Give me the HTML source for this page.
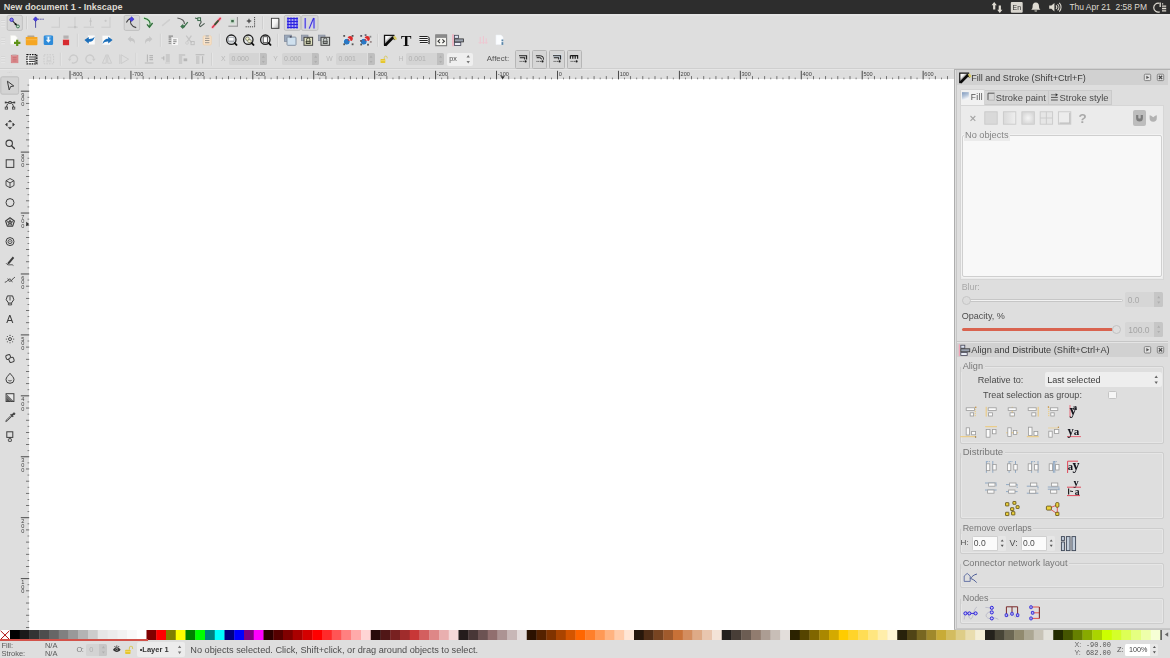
<!DOCTYPE html>
<html><head><meta charset="utf-8"><title>New document 1 - Inkscape</title>
<style>
html,body{margin:0;padding:0;}
body{width:1170px;height:658px;overflow:hidden;background:linear-gradient(#2d2d2d 0,#2d2d2d 14px,#dedede 14px);position:relative;font-family:"Liberation Sans",sans-serif;font-size:9.1px;color:#4c4c4c;}
#app{position:absolute;left:0;top:0;width:1170px;height:658px;overflow:hidden;filter:blur(0.5px);}
#app div,#app svg{position:absolute;box-sizing:border-box;}
#app svg{overflow:visible;}
.t{white-space:pre;}
</style></head><body><div id="app">
<div style="left:0px;top:0px;width:1170px;height:14px;background:#2d2d2d;"></div>
<div style="left:0px;top:14px;width:1170px;height:2px;background:linear-gradient(#e6e6e6,#e2e2e2);"></div>
<div class="t" style="left:3.8px;top:1.3px;font-size:9.06px;color:#dfdbd2;line-height:12px;font-weight:bold;">New document 1 - Inkscape</div>
<div class="t" style="left:1069.4px;top:1.3px;font-size:8.46px;color:#dfdbd2;line-height:12px;">Thu Apr 21  2:58 PM</div>
<div style="left:0px;top:68.3px;width:1170px;height:1px;background:#cfcfcf;"></div>
<div style="left:0px;top:69.3px;width:1170px;height:0.8px;background:#e6e6e6;"></div>
<div style="left:29px;top:79.3px;width:925.3px;height:550.3px;background:#fff;"></div>
<svg style="left:0px;top:0px;" width="1170" height="658" viewBox="0 0 1170 658"><rect x="33.04" y="76.1" width="0.8" height="3.2" fill="#555"/><rect x="39.13" y="77.6" width="0.8" height="1.7" fill="#666"/><rect x="45.23" y="76.1" width="0.8" height="3.2" fill="#555"/><rect x="51.32" y="77.6" width="0.8" height="1.7" fill="#666"/><rect x="57.41" y="76.1" width="0.8" height="3.2" fill="#555"/><rect x="63.51" y="77.6" width="0.8" height="1.7" fill="#666"/><rect x="69.55" y="70.8" width="0.9" height="8.6" fill="#3a3a3a"/><rect x="75.69" y="77.6" width="0.8" height="1.7" fill="#666"/><rect x="81.79" y="76.1" width="0.8" height="3.2" fill="#555"/><rect x="87.88" y="77.6" width="0.8" height="1.7" fill="#666"/><rect x="93.97" y="76.1" width="0.8" height="3.2" fill="#555"/><rect x="100.07" y="77.6" width="0.8" height="1.7" fill="#666"/><rect x="106.16" y="76.1" width="0.8" height="3.2" fill="#555"/><rect x="112.26" y="77.6" width="0.8" height="1.7" fill="#666"/><rect x="118.35" y="76.1" width="0.8" height="3.2" fill="#555"/><rect x="124.44" y="77.6" width="0.8" height="1.7" fill="#666"/><rect x="130.49" y="70.8" width="0.9" height="8.6" fill="#3a3a3a"/><rect x="136.63" y="77.6" width="0.8" height="1.7" fill="#666"/><rect x="142.72" y="76.1" width="0.8" height="3.2" fill="#555"/><rect x="148.82" y="77.6" width="0.8" height="1.7" fill="#666"/><rect x="154.91" y="76.1" width="0.8" height="3.2" fill="#555"/><rect x="161.01" y="77.6" width="0.8" height="1.7" fill="#666"/><rect x="167.10" y="76.1" width="0.8" height="3.2" fill="#555"/><rect x="173.19" y="77.6" width="0.8" height="1.7" fill="#666"/><rect x="179.29" y="76.1" width="0.8" height="3.2" fill="#555"/><rect x="185.38" y="77.6" width="0.8" height="1.7" fill="#666"/><rect x="191.43" y="70.8" width="0.9" height="8.6" fill="#3a3a3a"/><rect x="197.57" y="77.6" width="0.8" height="1.7" fill="#666"/><rect x="203.66" y="76.1" width="0.8" height="3.2" fill="#555"/><rect x="209.76" y="77.6" width="0.8" height="1.7" fill="#666"/><rect x="215.85" y="76.1" width="0.8" height="3.2" fill="#555"/><rect x="221.94" y="77.6" width="0.8" height="1.7" fill="#666"/><rect x="228.04" y="76.1" width="0.8" height="3.2" fill="#555"/><rect x="234.13" y="77.6" width="0.8" height="1.7" fill="#666"/><rect x="240.22" y="76.1" width="0.8" height="3.2" fill="#555"/><rect x="246.32" y="77.6" width="0.8" height="1.7" fill="#666"/><rect x="252.36" y="70.8" width="0.9" height="8.6" fill="#3a3a3a"/><rect x="258.51" y="77.6" width="0.8" height="1.7" fill="#666"/><rect x="264.60" y="76.1" width="0.8" height="3.2" fill="#555"/><rect x="270.69" y="77.6" width="0.8" height="1.7" fill="#666"/><rect x="276.79" y="76.1" width="0.8" height="3.2" fill="#555"/><rect x="282.88" y="77.6" width="0.8" height="1.7" fill="#666"/><rect x="288.98" y="76.1" width="0.8" height="3.2" fill="#555"/><rect x="295.07" y="77.6" width="0.8" height="1.7" fill="#666"/><rect x="301.16" y="76.1" width="0.8" height="3.2" fill="#555"/><rect x="307.26" y="77.6" width="0.8" height="1.7" fill="#666"/><rect x="313.30" y="70.8" width="0.9" height="8.6" fill="#3a3a3a"/><rect x="319.44" y="77.6" width="0.8" height="1.7" fill="#666"/><rect x="325.54" y="76.1" width="0.8" height="3.2" fill="#555"/><rect x="331.63" y="77.6" width="0.8" height="1.7" fill="#666"/><rect x="337.73" y="76.1" width="0.8" height="3.2" fill="#555"/><rect x="343.82" y="77.6" width="0.8" height="1.7" fill="#666"/><rect x="349.91" y="76.1" width="0.8" height="3.2" fill="#555"/><rect x="356.01" y="77.6" width="0.8" height="1.7" fill="#666"/><rect x="362.10" y="76.1" width="0.8" height="3.2" fill="#555"/><rect x="368.19" y="77.6" width="0.8" height="1.7" fill="#666"/><rect x="374.24" y="70.8" width="0.9" height="8.6" fill="#3a3a3a"/><rect x="380.38" y="77.6" width="0.8" height="1.7" fill="#666"/><rect x="386.48" y="76.1" width="0.8" height="3.2" fill="#555"/><rect x="392.57" y="77.6" width="0.8" height="1.7" fill="#666"/><rect x="398.66" y="76.1" width="0.8" height="3.2" fill="#555"/><rect x="404.76" y="77.6" width="0.8" height="1.7" fill="#666"/><rect x="410.85" y="76.1" width="0.8" height="3.2" fill="#555"/><rect x="416.94" y="77.6" width="0.8" height="1.7" fill="#666"/><rect x="423.04" y="76.1" width="0.8" height="3.2" fill="#555"/><rect x="429.13" y="77.6" width="0.8" height="1.7" fill="#666"/><rect x="435.18" y="70.8" width="0.9" height="8.6" fill="#3a3a3a"/><rect x="441.32" y="77.6" width="0.8" height="1.7" fill="#666"/><rect x="447.41" y="76.1" width="0.8" height="3.2" fill="#555"/><rect x="453.51" y="77.6" width="0.8" height="1.7" fill="#666"/><rect x="459.60" y="76.1" width="0.8" height="3.2" fill="#555"/><rect x="465.69" y="77.6" width="0.8" height="1.7" fill="#666"/><rect x="471.79" y="76.1" width="0.8" height="3.2" fill="#555"/><rect x="477.88" y="77.6" width="0.8" height="1.7" fill="#666"/><rect x="483.98" y="76.1" width="0.8" height="3.2" fill="#555"/><rect x="490.07" y="77.6" width="0.8" height="1.7" fill="#666"/><rect x="496.11" y="70.8" width="0.9" height="8.6" fill="#3a3a3a"/><rect x="502.26" y="77.6" width="0.8" height="1.7" fill="#666"/><rect x="508.35" y="76.1" width="0.8" height="3.2" fill="#555"/><rect x="514.44" y="77.6" width="0.8" height="1.7" fill="#666"/><rect x="520.54" y="76.1" width="0.8" height="3.2" fill="#555"/><rect x="526.63" y="77.6" width="0.8" height="1.7" fill="#666"/><rect x="532.73" y="76.1" width="0.8" height="3.2" fill="#555"/><rect x="538.82" y="77.6" width="0.8" height="1.7" fill="#666"/><rect x="544.91" y="76.1" width="0.8" height="3.2" fill="#555"/><rect x="551.01" y="77.6" width="0.8" height="1.7" fill="#666"/><rect x="557.05" y="70.8" width="0.9" height="8.6" fill="#3a3a3a"/><rect x="563.19" y="77.6" width="0.8" height="1.7" fill="#666"/><rect x="569.29" y="76.1" width="0.8" height="3.2" fill="#555"/><rect x="575.38" y="77.6" width="0.8" height="1.7" fill="#666"/><rect x="581.48" y="76.1" width="0.8" height="3.2" fill="#555"/><rect x="587.57" y="77.6" width="0.8" height="1.7" fill="#666"/><rect x="593.66" y="76.1" width="0.8" height="3.2" fill="#555"/><rect x="599.76" y="77.6" width="0.8" height="1.7" fill="#666"/><rect x="605.85" y="76.1" width="0.8" height="3.2" fill="#555"/><rect x="611.94" y="77.6" width="0.8" height="1.7" fill="#666"/><rect x="617.99" y="70.8" width="0.9" height="8.6" fill="#3a3a3a"/><rect x="624.13" y="77.6" width="0.8" height="1.7" fill="#666"/><rect x="630.23" y="76.1" width="0.8" height="3.2" fill="#555"/><rect x="636.32" y="77.6" width="0.8" height="1.7" fill="#666"/><rect x="642.41" y="76.1" width="0.8" height="3.2" fill="#555"/><rect x="648.51" y="77.6" width="0.8" height="1.7" fill="#666"/><rect x="654.60" y="76.1" width="0.8" height="3.2" fill="#555"/><rect x="660.69" y="77.6" width="0.8" height="1.7" fill="#666"/><rect x="666.79" y="76.1" width="0.8" height="3.2" fill="#555"/><rect x="672.88" y="77.6" width="0.8" height="1.7" fill="#666"/><rect x="678.92" y="70.8" width="0.9" height="8.6" fill="#3a3a3a"/><rect x="685.07" y="77.6" width="0.8" height="1.7" fill="#666"/><rect x="691.16" y="76.1" width="0.8" height="3.2" fill="#555"/><rect x="697.26" y="77.6" width="0.8" height="1.7" fill="#666"/><rect x="703.35" y="76.1" width="0.8" height="3.2" fill="#555"/><rect x="709.44" y="77.6" width="0.8" height="1.7" fill="#666"/><rect x="715.54" y="76.1" width="0.8" height="3.2" fill="#555"/><rect x="721.63" y="77.6" width="0.8" height="1.7" fill="#666"/><rect x="727.73" y="76.1" width="0.8" height="3.2" fill="#555"/><rect x="733.82" y="77.6" width="0.8" height="1.7" fill="#666"/><rect x="739.86" y="70.8" width="0.9" height="8.6" fill="#3a3a3a"/><rect x="746.01" y="77.6" width="0.8" height="1.7" fill="#666"/><rect x="752.10" y="76.1" width="0.8" height="3.2" fill="#555"/><rect x="758.19" y="77.6" width="0.8" height="1.7" fill="#666"/><rect x="764.29" y="76.1" width="0.8" height="3.2" fill="#555"/><rect x="770.38" y="77.6" width="0.8" height="1.7" fill="#666"/><rect x="776.48" y="76.1" width="0.8" height="3.2" fill="#555"/><rect x="782.57" y="77.6" width="0.8" height="1.7" fill="#666"/><rect x="788.66" y="76.1" width="0.8" height="3.2" fill="#555"/><rect x="794.76" y="77.6" width="0.8" height="1.7" fill="#666"/><rect x="800.80" y="70.8" width="0.9" height="8.6" fill="#3a3a3a"/><rect x="806.94" y="77.6" width="0.8" height="1.7" fill="#666"/><rect x="813.04" y="76.1" width="0.8" height="3.2" fill="#555"/><rect x="819.13" y="77.6" width="0.8" height="1.7" fill="#666"/><rect x="825.23" y="76.1" width="0.8" height="3.2" fill="#555"/><rect x="831.32" y="77.6" width="0.8" height="1.7" fill="#666"/><rect x="837.41" y="76.1" width="0.8" height="3.2" fill="#555"/><rect x="843.51" y="77.6" width="0.8" height="1.7" fill="#666"/><rect x="849.60" y="76.1" width="0.8" height="3.2" fill="#555"/><rect x="855.69" y="77.6" width="0.8" height="1.7" fill="#666"/><rect x="861.74" y="70.8" width="0.9" height="8.6" fill="#3a3a3a"/><rect x="867.88" y="77.6" width="0.8" height="1.7" fill="#666"/><rect x="873.98" y="76.1" width="0.8" height="3.2" fill="#555"/><rect x="880.07" y="77.6" width="0.8" height="1.7" fill="#666"/><rect x="886.16" y="76.1" width="0.8" height="3.2" fill="#555"/><rect x="892.26" y="77.6" width="0.8" height="1.7" fill="#666"/><rect x="898.35" y="76.1" width="0.8" height="3.2" fill="#555"/><rect x="904.44" y="77.6" width="0.8" height="1.7" fill="#666"/><rect x="910.54" y="76.1" width="0.8" height="3.2" fill="#555"/><rect x="916.63" y="77.6" width="0.8" height="1.7" fill="#666"/><rect x="922.67" y="70.8" width="0.9" height="8.6" fill="#3a3a3a"/><rect x="928.82" y="77.6" width="0.8" height="1.7" fill="#666"/><rect x="934.91" y="76.1" width="0.8" height="3.2" fill="#555"/><rect x="941.01" y="77.6" width="0.8" height="1.7" fill="#666"/><rect x="947.10" y="76.1" width="0.8" height="3.2" fill="#555"/><text x="71.20" y="75.6" font-size="5.6" fill="#444" font-family="Liberation Sans, sans-serif">-800</text><text x="132.14" y="75.6" font-size="5.6" fill="#444" font-family="Liberation Sans, sans-serif">-700</text><text x="193.07" y="75.6" font-size="5.6" fill="#444" font-family="Liberation Sans, sans-serif">-600</text><text x="254.01" y="75.6" font-size="5.6" fill="#444" font-family="Liberation Sans, sans-serif">-500</text><text x="314.95" y="75.6" font-size="5.6" fill="#444" font-family="Liberation Sans, sans-serif">-400</text><text x="375.89" y="75.6" font-size="5.6" fill="#444" font-family="Liberation Sans, sans-serif">-300</text><text x="436.82" y="75.6" font-size="5.6" fill="#444" font-family="Liberation Sans, sans-serif">-200</text><text x="497.76" y="75.6" font-size="5.6" fill="#444" font-family="Liberation Sans, sans-serif">-100</text><text x="558.70" y="75.6" font-size="5.6" fill="#444" font-family="Liberation Sans, sans-serif">0</text><text x="619.64" y="75.6" font-size="5.6" fill="#444" font-family="Liberation Sans, sans-serif">100</text><text x="680.58" y="75.6" font-size="5.6" fill="#444" font-family="Liberation Sans, sans-serif">200</text><text x="741.51" y="75.6" font-size="5.6" fill="#444" font-family="Liberation Sans, sans-serif">300</text><text x="802.45" y="75.6" font-size="5.6" fill="#444" font-family="Liberation Sans, sans-serif">400</text><text x="863.39" y="75.6" font-size="5.6" fill="#444" font-family="Liberation Sans, sans-serif">500</text><text x="924.33" y="75.6" font-size="5.6" fill="#444" font-family="Liberation Sans, sans-serif">600</text><path d="M500.46 76.2h4.4l-2.2 3z" fill="#333"/><rect x="27.5" y="84.66" width="1.7" height="0.8" fill="#666"/><rect x="20.8" y="90.71" width="8.4" height="0.9" fill="#3a3a3a"/><rect x="27.5" y="96.85" width="1.7" height="0.8" fill="#666"/><rect x="26" y="102.94" width="3.2" height="0.8" fill="#555"/><rect x="27.5" y="109.04" width="1.7" height="0.8" fill="#666"/><rect x="26" y="115.13" width="3.2" height="0.8" fill="#555"/><rect x="27.5" y="121.22" width="1.7" height="0.8" fill="#666"/><rect x="26" y="127.32" width="3.2" height="0.8" fill="#555"/><rect x="27.5" y="133.41" width="1.7" height="0.8" fill="#666"/><rect x="26" y="139.51" width="3.2" height="0.8" fill="#555"/><rect x="27.5" y="145.60" width="1.7" height="0.8" fill="#666"/><rect x="20.8" y="151.64" width="8.4" height="0.9" fill="#3a3a3a"/><rect x="27.5" y="157.79" width="1.7" height="0.8" fill="#666"/><rect x="26" y="163.88" width="3.2" height="0.8" fill="#555"/><rect x="27.5" y="169.97" width="1.7" height="0.8" fill="#666"/><rect x="26" y="176.07" width="3.2" height="0.8" fill="#555"/><rect x="27.5" y="182.16" width="1.7" height="0.8" fill="#666"/><rect x="26" y="188.26" width="3.2" height="0.8" fill="#555"/><rect x="27.5" y="194.35" width="1.7" height="0.8" fill="#666"/><rect x="26" y="200.44" width="3.2" height="0.8" fill="#555"/><rect x="27.5" y="206.54" width="1.7" height="0.8" fill="#666"/><rect x="20.8" y="212.58" width="8.4" height="0.9" fill="#3a3a3a"/><rect x="27.5" y="218.72" width="1.7" height="0.8" fill="#666"/><rect x="26" y="224.82" width="3.2" height="0.8" fill="#555"/><rect x="27.5" y="230.91" width="1.7" height="0.8" fill="#666"/><rect x="26" y="237.01" width="3.2" height="0.8" fill="#555"/><rect x="27.5" y="243.10" width="1.7" height="0.8" fill="#666"/><rect x="26" y="249.19" width="3.2" height="0.8" fill="#555"/><rect x="27.5" y="255.29" width="1.7" height="0.8" fill="#666"/><rect x="26" y="261.38" width="3.2" height="0.8" fill="#555"/><rect x="27.5" y="267.48" width="1.7" height="0.8" fill="#666"/><rect x="20.8" y="273.52" width="8.4" height="0.9" fill="#3a3a3a"/><rect x="27.5" y="279.66" width="1.7" height="0.8" fill="#666"/><rect x="26" y="285.76" width="3.2" height="0.8" fill="#555"/><rect x="27.5" y="291.85" width="1.7" height="0.8" fill="#666"/><rect x="26" y="297.94" width="3.2" height="0.8" fill="#555"/><rect x="27.5" y="304.04" width="1.7" height="0.8" fill="#666"/><rect x="26" y="310.13" width="3.2" height="0.8" fill="#555"/><rect x="27.5" y="316.23" width="1.7" height="0.8" fill="#666"/><rect x="26" y="322.32" width="3.2" height="0.8" fill="#555"/><rect x="27.5" y="328.41" width="1.7" height="0.8" fill="#666"/><rect x="20.8" y="334.46" width="8.4" height="0.9" fill="#3a3a3a"/><rect x="27.5" y="340.60" width="1.7" height="0.8" fill="#666"/><rect x="26" y="346.69" width="3.2" height="0.8" fill="#555"/><rect x="27.5" y="352.79" width="1.7" height="0.8" fill="#666"/><rect x="26" y="358.88" width="3.2" height="0.8" fill="#555"/><rect x="27.5" y="364.98" width="1.7" height="0.8" fill="#666"/><rect x="26" y="371.07" width="3.2" height="0.8" fill="#555"/><rect x="27.5" y="377.16" width="1.7" height="0.8" fill="#666"/><rect x="26" y="383.26" width="3.2" height="0.8" fill="#555"/><rect x="27.5" y="389.35" width="1.7" height="0.8" fill="#666"/><rect x="20.8" y="395.39" width="8.4" height="0.9" fill="#3a3a3a"/><rect x="27.5" y="401.54" width="1.7" height="0.8" fill="#666"/><rect x="26" y="407.63" width="3.2" height="0.8" fill="#555"/><rect x="27.5" y="413.73" width="1.7" height="0.8" fill="#666"/><rect x="26" y="419.82" width="3.2" height="0.8" fill="#555"/><rect x="27.5" y="425.91" width="1.7" height="0.8" fill="#666"/><rect x="26" y="432.01" width="3.2" height="0.8" fill="#555"/><rect x="27.5" y="438.10" width="1.7" height="0.8" fill="#666"/><rect x="26" y="444.19" width="3.2" height="0.8" fill="#555"/><rect x="27.5" y="450.29" width="1.7" height="0.8" fill="#666"/><rect x="20.8" y="456.33" width="8.4" height="0.9" fill="#3a3a3a"/><rect x="27.5" y="462.48" width="1.7" height="0.8" fill="#666"/><rect x="26" y="468.57" width="3.2" height="0.8" fill="#555"/><rect x="27.5" y="474.66" width="1.7" height="0.8" fill="#666"/><rect x="26" y="480.76" width="3.2" height="0.8" fill="#555"/><rect x="27.5" y="486.85" width="1.7" height="0.8" fill="#666"/><rect x="26" y="492.94" width="3.2" height="0.8" fill="#555"/><rect x="27.5" y="499.04" width="1.7" height="0.8" fill="#666"/><rect x="26" y="505.13" width="3.2" height="0.8" fill="#555"/><rect x="27.5" y="511.23" width="1.7" height="0.8" fill="#666"/><rect x="20.8" y="517.27" width="8.4" height="0.9" fill="#3a3a3a"/><rect x="27.5" y="523.41" width="1.7" height="0.8" fill="#666"/><rect x="26" y="529.51" width="3.2" height="0.8" fill="#555"/><rect x="27.5" y="535.60" width="1.7" height="0.8" fill="#666"/><rect x="26" y="541.69" width="3.2" height="0.8" fill="#555"/><rect x="27.5" y="547.79" width="1.7" height="0.8" fill="#666"/><rect x="26" y="553.88" width="3.2" height="0.8" fill="#555"/><rect x="27.5" y="559.98" width="1.7" height="0.8" fill="#666"/><rect x="26" y="566.07" width="3.2" height="0.8" fill="#555"/><rect x="27.5" y="572.16" width="1.7" height="0.8" fill="#666"/><rect x="20.8" y="578.21" width="8.4" height="0.9" fill="#3a3a3a"/><rect x="27.5" y="584.35" width="1.7" height="0.8" fill="#666"/><rect x="26" y="590.44" width="3.2" height="0.8" fill="#555"/><rect x="27.5" y="596.54" width="1.7" height="0.8" fill="#666"/><rect x="26" y="602.63" width="3.2" height="0.8" fill="#555"/><rect x="27.5" y="608.73" width="1.7" height="0.8" fill="#666"/><rect x="26" y="614.82" width="3.2" height="0.8" fill="#555"/><rect x="27.5" y="620.91" width="1.7" height="0.8" fill="#666"/><rect x="26" y="627.01" width="3.2" height="0.8" fill="#555"/><text x="21.2" y="96.76" font-size="5.6" fill="#444" font-family="Liberation Sans, sans-serif">9</text><text x="21.2" y="101.36" font-size="5.6" fill="#444" font-family="Liberation Sans, sans-serif">0</text><text x="21.2" y="105.96" font-size="5.6" fill="#444" font-family="Liberation Sans, sans-serif">0</text><text x="21.2" y="157.69" font-size="5.6" fill="#444" font-family="Liberation Sans, sans-serif">8</text><text x="21.2" y="162.29" font-size="5.6" fill="#444" font-family="Liberation Sans, sans-serif">0</text><text x="21.2" y="166.89" font-size="5.6" fill="#444" font-family="Liberation Sans, sans-serif">0</text><text x="21.2" y="218.63" font-size="5.6" fill="#444" font-family="Liberation Sans, sans-serif">7</text><text x="21.2" y="223.23" font-size="5.6" fill="#444" font-family="Liberation Sans, sans-serif">0</text><text x="21.2" y="227.83" font-size="5.6" fill="#444" font-family="Liberation Sans, sans-serif">0</text><text x="21.2" y="279.57" font-size="5.6" fill="#444" font-family="Liberation Sans, sans-serif">6</text><text x="21.2" y="284.17" font-size="5.6" fill="#444" font-family="Liberation Sans, sans-serif">0</text><text x="21.2" y="288.77" font-size="5.6" fill="#444" font-family="Liberation Sans, sans-serif">0</text><text x="21.2" y="340.51" font-size="5.6" fill="#444" font-family="Liberation Sans, sans-serif">5</text><text x="21.2" y="345.11" font-size="5.6" fill="#444" font-family="Liberation Sans, sans-serif">0</text><text x="21.2" y="349.71" font-size="5.6" fill="#444" font-family="Liberation Sans, sans-serif">0</text><text x="21.2" y="401.44" font-size="5.6" fill="#444" font-family="Liberation Sans, sans-serif">4</text><text x="21.2" y="406.04" font-size="5.6" fill="#444" font-family="Liberation Sans, sans-serif">0</text><text x="21.2" y="410.64" font-size="5.6" fill="#444" font-family="Liberation Sans, sans-serif">0</text><text x="21.2" y="462.38" font-size="5.6" fill="#444" font-family="Liberation Sans, sans-serif">3</text><text x="21.2" y="466.98" font-size="5.6" fill="#444" font-family="Liberation Sans, sans-serif">0</text><text x="21.2" y="471.58" font-size="5.6" fill="#444" font-family="Liberation Sans, sans-serif">0</text><text x="21.2" y="523.32" font-size="5.6" fill="#444" font-family="Liberation Sans, sans-serif">2</text><text x="21.2" y="527.92" font-size="5.6" fill="#444" font-family="Liberation Sans, sans-serif">0</text><text x="21.2" y="532.52" font-size="5.6" fill="#444" font-family="Liberation Sans, sans-serif">0</text><text x="21.2" y="584.26" font-size="5.6" fill="#444" font-family="Liberation Sans, sans-serif">1</text><text x="21.2" y="588.86" font-size="5.6" fill="#444" font-family="Liberation Sans, sans-serif">0</text><text x="21.2" y="593.46" font-size="5.6" fill="#444" font-family="Liberation Sans, sans-serif">0</text><path d="M26.2 221.80v4.4l3 -2.2z" fill="#333"/></svg>
<svg style="left:0px;top:630.2px;" width="1170" height="10" viewBox="0 0 1170 10"><rect x="0" y="0" width="10" height="10" fill="#fff"/><path d="M0.6 0.8L9.4 9.4M9.4 0.8L0.6 9.4" stroke="#b01010" stroke-width="1" fill="none"/><rect x="10.00" y="0" width="10.05" height="10" fill="#000000"/><rect x="19.75" y="0" width="10.05" height="10" fill="#1a1a1a"/><rect x="29.50" y="0" width="10.05" height="10" fill="#333333"/><rect x="39.25" y="0" width="10.05" height="10" fill="#4d4d4d"/><rect x="49.00" y="0" width="10.05" height="10" fill="#666666"/><rect x="58.75" y="0" width="10.05" height="10" fill="#808080"/><rect x="68.50" y="0" width="10.05" height="10" fill="#999999"/><rect x="78.25" y="0" width="10.05" height="10" fill="#b3b3b3"/><rect x="88.00" y="0" width="10.05" height="10" fill="#cccccc"/><rect x="97.75" y="0" width="10.05" height="10" fill="#e6e6e6"/><rect x="107.50" y="0" width="10.05" height="10" fill="#ececec"/><rect x="117.25" y="0" width="10.05" height="10" fill="#f2f2f2"/><rect x="127.00" y="0" width="10.05" height="10" fill="#f9f9f9"/><rect x="136.75" y="0" width="10.05" height="10" fill="#ffffff"/><rect x="146.50" y="0" width="10.05" height="10" fill="#800000"/><rect x="156.25" y="0" width="10.05" height="10" fill="#ff0000"/><rect x="166.00" y="0" width="10.05" height="10" fill="#808000"/><rect x="175.75" y="0" width="10.05" height="10" fill="#ffff00"/><rect x="185.50" y="0" width="10.05" height="10" fill="#008000"/><rect x="195.25" y="0" width="10.05" height="10" fill="#00ff00"/><rect x="205.00" y="0" width="10.05" height="10" fill="#008080"/><rect x="214.75" y="0" width="10.05" height="10" fill="#00ffff"/><rect x="224.50" y="0" width="10.05" height="10" fill="#000080"/><rect x="234.25" y="0" width="10.05" height="10" fill="#0000ff"/><rect x="244.00" y="0" width="10.05" height="10" fill="#800080"/><rect x="253.75" y="0" width="10.05" height="10" fill="#ff00ff"/><rect x="263.50" y="0" width="10.05" height="10" fill="#2b0000"/><rect x="273.25" y="0" width="10.05" height="10" fill="#550000"/><rect x="283.00" y="0" width="10.05" height="10" fill="#800000"/><rect x="292.75" y="0" width="10.05" height="10" fill="#aa0000"/><rect x="302.50" y="0" width="10.05" height="10" fill="#d40000"/><rect x="312.25" y="0" width="10.05" height="10" fill="#ff0000"/><rect x="322.00" y="0" width="10.05" height="10" fill="#ff2a2a"/><rect x="331.75" y="0" width="10.05" height="10" fill="#ff5555"/><rect x="341.50" y="0" width="10.05" height="10" fill="#ff8080"/><rect x="351.25" y="0" width="10.05" height="10" fill="#ffaaaa"/><rect x="361.00" y="0" width="10.05" height="10" fill="#ffd5d5"/><rect x="370.75" y="0" width="10.05" height="10" fill="#280b0b"/><rect x="380.50" y="0" width="10.05" height="10" fill="#501616"/><rect x="390.25" y="0" width="10.05" height="10" fill="#782121"/><rect x="400.00" y="0" width="10.05" height="10" fill="#a02c2c"/><rect x="409.75" y="0" width="10.05" height="10" fill="#c83737"/><rect x="419.50" y="0" width="10.05" height="10" fill="#d35f5f"/><rect x="429.25" y="0" width="10.05" height="10" fill="#de8787"/><rect x="439.00" y="0" width="10.05" height="10" fill="#e9afaf"/><rect x="448.75" y="0" width="10.05" height="10" fill="#f4d7d7"/><rect x="458.50" y="0" width="10.05" height="10" fill="#241c1c"/><rect x="468.25" y="0" width="10.05" height="10" fill="#483737"/><rect x="478.00" y="0" width="10.05" height="10" fill="#6c5353"/><rect x="487.75" y="0" width="10.05" height="10" fill="#916f6f"/><rect x="497.50" y="0" width="10.05" height="10" fill="#ac9393"/><rect x="507.25" y="0" width="10.05" height="10" fill="#c8b7b7"/><rect x="517.00" y="0" width="10.05" height="10" fill="#e3dbdb"/><rect x="526.75" y="0" width="10.05" height="10" fill="#2b1100"/><rect x="536.50" y="0" width="10.05" height="10" fill="#552200"/><rect x="546.25" y="0" width="10.05" height="10" fill="#803300"/><rect x="556.00" y="0" width="10.05" height="10" fill="#aa4400"/><rect x="565.75" y="0" width="10.05" height="10" fill="#d45500"/><rect x="575.50" y="0" width="10.05" height="10" fill="#ff6600"/><rect x="585.25" y="0" width="10.05" height="10" fill="#ff7f2a"/><rect x="595.00" y="0" width="10.05" height="10" fill="#ff9955"/><rect x="604.75" y="0" width="10.05" height="10" fill="#ffb380"/><rect x="614.50" y="0" width="10.05" height="10" fill="#ffccaa"/><rect x="624.25" y="0" width="10.05" height="10" fill="#ffe6d5"/><rect x="634.00" y="0" width="10.05" height="10" fill="#28170b"/><rect x="643.75" y="0" width="10.05" height="10" fill="#502d16"/><rect x="653.50" y="0" width="10.05" height="10" fill="#784421"/><rect x="663.25" y="0" width="10.05" height="10" fill="#a05a2c"/><rect x="673.00" y="0" width="10.05" height="10" fill="#c87137"/><rect x="682.75" y="0" width="10.05" height="10" fill="#d38d5f"/><rect x="692.50" y="0" width="10.05" height="10" fill="#deaa87"/><rect x="702.25" y="0" width="10.05" height="10" fill="#e9c6af"/><rect x="712.00" y="0" width="10.05" height="10" fill="#f4e3d7"/><rect x="721.75" y="0" width="10.05" height="10" fill="#241f1c"/><rect x="731.50" y="0" width="10.05" height="10" fill="#483e37"/><rect x="741.25" y="0" width="10.05" height="10" fill="#6c5d53"/><rect x="751.00" y="0" width="10.05" height="10" fill="#917c6f"/><rect x="760.75" y="0" width="10.05" height="10" fill="#ac9d93"/><rect x="770.50" y="0" width="10.05" height="10" fill="#c8beb7"/><rect x="780.25" y="0" width="10.05" height="10" fill="#e3dedb"/><rect x="790.00" y="0" width="10.05" height="10" fill="#2b2200"/><rect x="799.75" y="0" width="10.05" height="10" fill="#554400"/><rect x="809.50" y="0" width="10.05" height="10" fill="#806600"/><rect x="819.25" y="0" width="10.05" height="10" fill="#aa8800"/><rect x="829.00" y="0" width="10.05" height="10" fill="#d4aa00"/><rect x="838.75" y="0" width="10.05" height="10" fill="#ffcc00"/><rect x="848.50" y="0" width="10.05" height="10" fill="#ffd42a"/><rect x="858.25" y="0" width="10.05" height="10" fill="#ffdd55"/><rect x="868.00" y="0" width="10.05" height="10" fill="#ffe680"/><rect x="877.75" y="0" width="10.05" height="10" fill="#ffeeaa"/><rect x="887.50" y="0" width="10.05" height="10" fill="#fff6d5"/><rect x="897.25" y="0" width="10.05" height="10" fill="#28220b"/><rect x="907.00" y="0" width="10.05" height="10" fill="#504416"/><rect x="916.75" y="0" width="10.05" height="10" fill="#786721"/><rect x="926.50" y="0" width="10.05" height="10" fill="#a0892c"/><rect x="936.25" y="0" width="10.05" height="10" fill="#c8ab37"/><rect x="946.00" y="0" width="10.05" height="10" fill="#d3bc5f"/><rect x="955.75" y="0" width="10.05" height="10" fill="#decd87"/><rect x="965.50" y="0" width="10.05" height="10" fill="#e9ddaf"/><rect x="975.25" y="0" width="10.05" height="10" fill="#f4eed7"/><rect x="985.00" y="0" width="10.05" height="10" fill="#24221c"/><rect x="994.75" y="0" width="10.05" height="10" fill="#484537"/><rect x="1004.50" y="0" width="10.05" height="10" fill="#6c6753"/><rect x="1014.25" y="0" width="10.05" height="10" fill="#918a6f"/><rect x="1024.00" y="0" width="10.05" height="10" fill="#aca793"/><rect x="1033.75" y="0" width="10.05" height="10" fill="#c8c4b7"/><rect x="1043.50" y="0" width="10.05" height="10" fill="#e3e2db"/><rect x="1053.25" y="0" width="10.05" height="10" fill="#222b00"/><rect x="1063.00" y="0" width="10.05" height="10" fill="#445500"/><rect x="1072.75" y="0" width="10.05" height="10" fill="#668000"/><rect x="1082.50" y="0" width="10.05" height="10" fill="#88aa00"/><rect x="1092.25" y="0" width="10.05" height="10" fill="#aad400"/><rect x="1102.00" y="0" width="10.05" height="10" fill="#ccff00"/><rect x="1111.75" y="0" width="10.05" height="10" fill="#d4ff2a"/><rect x="1121.50" y="0" width="10.05" height="10" fill="#ddff55"/><rect x="1131.25" y="0" width="10.05" height="10" fill="#e5ff80"/><rect x="1141.00" y="0" width="10.05" height="10" fill="#eeffaa"/><rect x="1150.75" y="0" width="10.05" height="10" fill="#f6ffd5"/><rect x="1160.50" y="0" width="1.3" height="10" fill="#222"/><rect x="1161.80" y="0" width="8.5" height="10" fill="#dedede"/><path d="M1168.2 2.2v4.6l-3.4 -2.3z" fill="#666"/></svg>
<div style="left:0px;top:639.1px;width:147.5px;height:1.7px;background:#d2524a;"></div>
<div class="t" style="left:1.4px;top:639.6px;font-size:7.5px;color:#5a5a5a;line-height:12px;">Fill:</div>
<div class="t" style="left:1.4px;top:648.2px;font-size:7.5px;color:#5a5a5a;line-height:12px;">Stroke:</div>
<div class="t" style="left:44.9px;top:639.6px;font-size:7.5px;color:#5a5a5a;line-height:12px;">N/A</div>
<div class="t" style="left:44.9px;top:648.2px;font-size:7.5px;color:#5a5a5a;line-height:12px;">N/A</div>
<div class="t" style="left:76.4px;top:643.8px;font-size:7.4px;color:#7a7a7a;line-height:12px;letter-spacing:-0.4px;">O:</div>
<div style="left:86px;top:643.6px;width:13px;height:12.4px;background:#d3d3d3;border-radius:1.5px 0 0 1.5px;"></div>
<div class="t" style="left:89.2px;top:644px;font-size:7.4px;color:#b0b0b0;line-height:12px;">0</div>
<div style="left:99.4px;top:643.6px;width:8px;height:12.4px;background:#c6c6c6;border-radius:0 1.5px 1.5px 0;"></div>
<div style="left:136.6px;top:642.2px;width:48.2px;height:15px;background:#ececec;border-radius:2px;"></div>
<div class="t" style="left:139.7px;top:643.8px;font-size:7.53px;color:#333;line-height:12px;font-weight:bold;">•Layer 1</div>
<div class="t" style="left:190.3px;top:643.6px;font-size:9.19px;color:#4c4c4c;line-height:12px;">No objects selected. Click, Shift+click, or drag around objects to select.</div>
<div class="t" style="left:1074.4px;top:639.2px;font-size:7.2px;color:#666;line-height:12px;">X:</div>
<div class="t" style="left:1074.4px;top:646.8px;font-size:7.2px;color:#666;line-height:12px;">Y:</div>
<div class="t" style="left:1080px;top:639.2px;font-size:6.95px;color:#555;line-height:12px;font-family:'Liberation Mono','DejaVu Sans Mono',monospace;width:30.9px;text-align:right;">-90.00</div>
<div class="t" style="left:1080px;top:646.8px;font-size:6.95px;color:#555;line-height:12px;font-family:'Liberation Mono','DejaVu Sans Mono',monospace;width:30.9px;text-align:right;">682.00</div>
<div class="t" style="left:1117px;top:644px;font-size:7.43px;color:#555;line-height:12px;">Z:</div>
<div style="left:1125px;top:643.8px;width:25.4px;height:11.8px;background:#fff;border-radius:1.5px 0 0 1.5px;"></div>
<div class="t" style="left:1129px;top:643.9px;font-size:7.19px;color:#444;line-height:12px;">100%</div>
<div style="left:1150.4px;top:643.8px;width:8px;height:11.8px;background:#e8e8e8;border-radius:0 1.5px 1.5px 0;"></div>
<div style="left:954px;top:69px;width:216px;height:560.6px;background:#dedede;border-left:1px solid #adadad;border-top:1px solid #b2b2b2;border-bottom:1px solid #c4c4c4;"></div>
<div style="left:956px;top:70px;width:214px;height:558.6px;border-left:1px solid #c6c6c6;border-bottom:1px solid #c8c8c8;"></div>
<div style="left:957px;top:70px;width:211px;height:15px;background:#d1d1d1;"></div>
<div class="t" style="left:971.2px;top:71.9px;font-size:9.06px;color:#3c3c3c;line-height:12px;">Fill and Stroke (Shift+Ctrl+F)</div>
<div style="left:960px;top:88.6px;width:25px;height:17px;background:#f1f1f1;border:1px solid #d4d4d4;border-bottom:none;border-radius:2px 2px 0 0;"></div>
<div style="left:985px;top:90.2px;width:64px;height:14.6px;background:#d6d6d6;border:1px solid #cacaca;border-left:none;"></div>
<div style="left:1049px;top:90.2px;width:62.6px;height:14.6px;background:#d6d6d6;border:1px solid #cacaca;border-left:none;"></div>
<div class="t" style="left:970.8px;top:91.2px;font-size:8.4px;color:#4c4c4c;line-height:12px;letter-spacing:0.35px;">Fill</div>
<div class="t" style="left:995.8px;top:91.6px;font-size:9.37px;color:#4c4c4c;line-height:12px;">Stroke paint</div>
<div class="t" style="left:1059.6px;top:91.6px;font-size:9.38px;color:#4c4c4c;line-height:12px;">Stroke style</div>
<div style="left:959.6px;top:105px;width:204.6px;height:175px;background:#ebebeb;border:1px solid #d6d6d6;"></div>
<div style="left:961.8px;top:135px;width:200px;height:141.6px;background:#f8f8f8;border:1px solid #cfcfcf;border-radius:2px;box-shadow:0 0 0 1px #f2f2f2;"></div>
<div style="left:963.6px;top:129px;width:46px;height:12px;background:#ebebeb;"></div>
<div class="t" style="left:965px;top:129px;font-size:9.21px;color:#858585;line-height:12px;">No objects</div>
<div style="left:1133px;top:110px;width:12.8px;height:16.4px;background:#bdbdbd;border-radius:2px;"></div>
<div class="t" style="left:961.7px;top:281px;font-size:8.8px;color:#a8a8a8;line-height:12px;">Blur:</div>
<div style="left:962px;top:298.8px;width:161.4px;height:3px;background:#f2f2f2;border:1px solid #c6c6c6;border-radius:1.5px;"></div>
<div style="left:962px;top:295.6px;width:9px;height:9px;background:#dcdcdc;border:1px solid #c6c6c6;border-radius:50%;"></div>
<div style="left:1125px;top:292.4px;width:29px;height:15px;background:#d6d6d6;border-radius:1.5px 0 0 1.5px;"></div>
<div class="t" style="left:1127.8px;top:294.2px;font-size:8.34px;color:#a8a8a8;line-height:12px;">0.0</div>
<div style="left:1154.4px;top:292.4px;width:8.6px;height:15px;background:#c6c6c6;border-radius:0 1.5px 1.5px 0;"></div>
<div class="t" style="left:961.7px;top:310.4px;font-size:9.07px;color:#4c4c4c;line-height:12px;">Opacity, %</div>
<div style="left:962px;top:327.6px;width:151px;height:3px;background:#d9634f;border-radius:1.5px;"></div>
<div style="left:1112px;top:324.6px;width:9px;height:9px;background:#dedede;border:1px solid #c2c2c2;border-radius:50%;"></div>
<div style="left:1125px;top:321.8px;width:29px;height:15px;background:#d6d6d6;border-radius:1.5px 0 0 1.5px;"></div>
<div class="t" style="left:1128.3px;top:323.6px;font-size:8.51px;color:#a4a4a4;line-height:12px;">100.0</div>
<div style="left:1154.4px;top:321.8px;width:8.6px;height:15px;background:#c6c6c6;border-radius:0 1.5px 1.5px 0;"></div>
<div style="left:957px;top:341px;width:211px;height:1px;background:#c6c6c6;"></div>
<div style="left:957px;top:342px;width:211px;height:1px;background:#e4e4e4;"></div>
<div style="left:957px;top:343px;width:211px;height:14px;background:#d1d1d1;"></div>
<div class="t" style="left:971.3px;top:344.2px;font-size:9.22px;color:#3c3c3c;line-height:12px;">Align and Distribute (Shift+Ctrl+A)</div>
<div style="left:959.6px;top:366px;width:204px;height:77.6px;border:1px solid #cdcdcd;border-radius:2px;box-shadow:inset 0 0 0 1px #e6e6e6;"></div>
<div style="left:961.4px;top:360px;width:23.2px;height:12px;background:#dedede;"></div>
<div class="t" style="left:962.7px;top:360px;font-size:9.13px;color:#777;line-height:12px;">Align</div>
<div style="left:959.6px;top:452px;width:204px;height:67px;border:1px solid #cdcdcd;border-radius:2px;box-shadow:inset 0 0 0 1px #e6e6e6;"></div>
<div style="left:961.4px;top:446px;width:43.4px;height:12px;background:#dedede;"></div>
<div class="t" style="left:962.7px;top:446px;font-size:9.59px;color:#777;line-height:12px;">Distribute</div>
<div style="left:959.6px;top:528px;width:204px;height:25.6px;border:1px solid #cdcdcd;border-radius:2px;box-shadow:inset 0 0 0 1px #e6e6e6;"></div>
<div style="left:961.4px;top:522px;width:72.1px;height:12px;background:#dedede;"></div>
<div class="t" style="left:962.7px;top:522px;font-size:8.89px;color:#777;line-height:12px;">Remove overlaps</div>
<div style="left:959.6px;top:563px;width:204px;height:25px;border:1px solid #cdcdcd;border-radius:2px;box-shadow:inset 0 0 0 1px #e6e6e6;"></div>
<div style="left:961.4px;top:557px;width:107.9px;height:12px;background:#dedede;"></div>
<div class="t" style="left:962.7px;top:557px;font-size:9.26px;color:#777;line-height:12px;">Connector network layout</div>
<div style="left:959.6px;top:598px;width:204px;height:25.8px;border:1px solid #cdcdcd;border-radius:2px;box-shadow:inset 0 0 0 1px #e6e6e6;"></div>
<div style="left:961.4px;top:592px;width:28.8px;height:12px;background:#dedede;"></div>
<div class="t" style="left:962.7px;top:592px;font-size:8.96px;color:#777;line-height:12px;">Nodes</div>
<div class="t" style="left:977.7px;top:373.8px;font-size:9.14px;color:#4c4c4c;line-height:12px;">Relative to:</div>
<div style="left:1044.6px;top:372.2px;width:117.2px;height:15px;background:#eeeeee;border-radius:2px;"></div>
<div class="t" style="left:1047.2px;top:373.8px;font-size:9.06px;color:#3c3c3c;line-height:12px;">Last selected</div>
<div class="t" style="left:983px;top:389px;font-size:9.03px;color:#4c4c4c;line-height:12px;">Treat selection as group:</div>
<div style="left:1108.4px;top:390.6px;width:8.4px;height:8.4px;background:#f6f6f6;border:1px solid #c4c4c4;border-radius:1.5px;"></div>
<div class="t" style="left:960.6px;top:537.4px;font-size:8.1px;color:#4c4c4c;line-height:12px;">H:</div>
<div style="left:972px;top:535.6px;width:26px;height:15.2px;background:#fbfbfb;border:1px solid #d0d0d0;border-radius:1.5px 0 0 1.5px;"></div>
<div class="t" style="left:973.8px;top:537.4px;font-size:8.56px;color:#4c4c4c;line-height:12px;">0.0</div>
<div style="left:998px;top:535.6px;width:8.4px;height:15.2px;background:#e6e6e6;border-radius:0 1.5px 1.5px 0;"></div>
<div class="t" style="left:1009.6px;top:537.4px;font-size:8.92px;color:#4c4c4c;line-height:12px;">V:</div>
<div style="left:1021px;top:535.6px;width:26px;height:15.2px;background:#fbfbfb;border:1px solid #d0d0d0;border-radius:1.5px 0 0 1.5px;"></div>
<div class="t" style="left:1023px;top:537.4px;font-size:8.49px;color:#4c4c4c;line-height:12px;">0.0</div>
<div style="left:1047px;top:535.6px;width:8.4px;height:15.2px;background:#e6e6e6;border-radius:0 1.5px 1.5px 0;"></div>
<div class="t" style="left:221px;top:53.2px;font-size:6.8px;color:#b9b9b9;line-height:12px;">X</div>
<div style="left:228.9px;top:53px;width:30.2px;height:12px;background:#d4d4d4;border-radius:1.5px 0 0 1.5px;"></div>
<div class="t" style="left:231.4px;top:53.2px;font-size:6.95px;color:#b0b0b0;line-height:12px;">0.000</div>
<div style="left:259.6px;top:52.6px;width:7.4px;height:12.8px;background:#bfbfbf;border-radius:0 1.5px 1.5px 0;"></div>
<div class="t" style="left:273.2px;top:53.2px;font-size:6.8px;color:#b9b9b9;line-height:12px;">Y</div>
<div style="left:281.6px;top:53px;width:30.1px;height:12px;background:#d4d4d4;border-radius:1.5px 0 0 1.5px;"></div>
<div class="t" style="left:284.1px;top:53.2px;font-size:6.95px;color:#b0b0b0;line-height:12px;">0.000</div>
<div style="left:312.2px;top:52.6px;width:7.3px;height:12.8px;background:#bfbfbf;border-radius:0 1.5px 1.5px 0;"></div>
<div class="t" style="left:326.2px;top:53.2px;font-size:6.8px;color:#b9b9b9;line-height:12px;">W</div>
<div style="left:336.1px;top:53px;width:30.9px;height:12px;background:#d4d4d4;border-radius:1.5px 0 0 1.5px;"></div>
<div class="t" style="left:338.6px;top:53.2px;font-size:6.95px;color:#b0b0b0;line-height:12px;">0.001</div>
<div style="left:367.5px;top:52.6px;width:7.5px;height:12.8px;background:#bfbfbf;border-radius:0 1.5px 1.5px 0;"></div>
<div class="t" style="left:398.4px;top:53.2px;font-size:6.8px;color:#b9b9b9;line-height:12px;">H</div>
<div style="left:406px;top:53px;width:30.6px;height:12px;background:#d4d4d4;border-radius:1.5px 0 0 1.5px;"></div>
<div class="t" style="left:408.5px;top:53.2px;font-size:6.95px;color:#b0b0b0;line-height:12px;">0.001</div>
<div style="left:437.1px;top:52.6px;width:7.4px;height:12.8px;background:#bfbfbf;border-radius:0 1.5px 1.5px 0;"></div>
<div style="left:446.8px;top:52.6px;width:26.6px;height:13.4px;background:#efefef;border-radius:2px;"></div>
<div class="t" style="left:449.2px;top:53.2px;font-size:7.1px;color:#4c4c4c;line-height:12px;">px</div>
<div class="t" style="left:486.8px;top:53.4px;font-size:7.95px;color:#555;line-height:12px;">Affect:</div>
<div style="left:515.2px;top:50px;width:15.2px;height:18.6px;background:#d6d6d6;border:1px solid #b6b6b6;border-radius:1.5px;"></div>
<div style="left:532.3px;top:50px;width:15.2px;height:18.6px;background:#d6d6d6;border:1px solid #b6b6b6;border-radius:1.5px;"></div>
<div style="left:549.4px;top:50px;width:15.2px;height:18.6px;background:#d6d6d6;border:1px solid #b6b6b6;border-radius:1.5px;"></div>
<div style="left:566.5px;top:50px;width:15.2px;height:18.6px;background:#d6d6d6;border:1px solid #b6b6b6;border-radius:1.5px;"></div>
<svg style="left:0px;top:0px;" width="1170" height="658" viewBox="0 0 1170 658"><g transform="translate(994.2,6)"><path d="M0 -3.9l2.6 3.2h-1.5v4.2h-2.2v-4.2h-1.5z" fill="#dfdbd2"/></g><g transform="translate(999.8,9)"><path d="M0 3.9l2.6 -3.2h-1.5v-4.2h-2.2v4.2h-1.5z" fill="#dfdbd2"/></g><rect x="1010.8" y="1.9" width="11.9" height="10.8" rx="1" fill="#d9d6cf"/><text x="1012.6" y="10.2" font-size="8" fill="#2c2c2c" font-family="Liberation Sans, sans-serif" textLength="8.4" lengthAdjust="spacingAndGlyphs">En</text><g transform="translate(1035.8,7)"><path d="M0 -4.4c2.4 0 3.2 1.8 3.2 3.8c0 1.6 0.5 2.6 1.5 3.4h-9.4c1 -0.8 1.5 -1.8 1.5 -3.4c0 -2 0.8 -3.8 3.2 -3.8z" fill="#dfdbd2"/><path d="M-1.4 3.4h2.8a1.4 1.2 0 0 1 -2.8 0z" fill="#dfdbd2"/></g><g transform="translate(1055,7.2)"><path d="M-5.8 -1.6h2.2l3 -2.6v8.4l-3 -2.6h-2.2z" fill="#dfdbd2"/><path d="M1 -1.8a2.6 2.6 0 0 1 0 3.6M2.6 -3.2a4.6 4.6 0 0 1 0 6.4M4.3 -4.4a6.4 6.4 0 0 1 0 8.8" stroke="#dfdbd2" stroke-width="1.05" fill="none"/></g><g transform="translate(1160.6,7.2)"><path d="M-1.2 -3.9a4.5 4.5 0 1 0 0.3 8.6" stroke="#dfdbd2" stroke-width="1.2" fill="none"/><path d="M-0.4 -4.8v4.6" stroke="#dfdbd2" stroke-width="1.3"/><path d="M1.4 -3.4h1.2M1.4 -1h4.2M1.4 1.3h4.2M1.4 3.6h4.2" stroke="#dfdbd2" stroke-width="1.3"/></g><g transform="translate(3.2,23)"><path d="M-2 -2.4h4M-2 0h4M-2 2.4h4" stroke="#cfcfcf" stroke-width="0.8"/><path d="M-2 -1.6h4M-2 0.8h4M-2 3.2h4" stroke="#ececec" stroke-width="0.8"/></g><g transform="translate(3.2,40.5)"><path d="M-2 -2.4h4M-2 0h4M-2 2.4h4" stroke="#cfcfcf" stroke-width="0.8"/><path d="M-2 -1.6h4M-2 0.8h4M-2 3.2h4" stroke="#ececec" stroke-width="0.8"/></g><g transform="translate(3.2,59)"><path d="M-2 -2.4h4M-2 0h4M-2 2.4h4" stroke="#cfcfcf" stroke-width="0.8"/><path d="M-2 -1.6h4M-2 0.8h4M-2 3.2h4" stroke="#ececec" stroke-width="0.8"/></g><rect x="7.2" y="15.4" width="15.2" height="15" rx="1.5" fill="#d7d7d7" stroke="#bdbdbd" stroke-width="0.9"/><g transform="translate(15,22.8)"><path d="M-3.4 -3L2.8 3.6" stroke="#333" stroke-width="1.1"/><circle cx="-3.4" cy="-3" r="1.7" fill="#8a7fe6" stroke="#3228c8" stroke-width="0.9"/><circle cx="0.6" cy="1.4" r="1" fill="#111"/><circle cx="2.9" cy="3.6" r="1.5" fill="#cfe4cf" stroke="#2d6b45" stroke-width="0.9"/></g><rect x="26.1" y="16.3" width="0.9" height="13" fill="#cdcdcd"/><rect x="27" y="16.3" width="0.8" height="13" fill="#e8e8e8"/><g transform="translate(39,22.8)"><path d="M-3.4 -2.4V5" stroke="#2c2890" stroke-width="0.8"/><path d="M-1 -3.6H5" stroke="#2c2890" stroke-width="0.8" stroke-dasharray="1.4 0.8"/><path d="M-3.4 -6l2.3 2.4l-2.3 2.4l-2.3 -2.4z" fill="#4a3fe0" stroke="#2a20b0" stroke-width="0.5"/></g><g transform="translate(56,22.8)"><path d="M3.4 -5.6V4.4M-4.6 4.4H4" stroke="#cbcbcb" stroke-width="1" fill="none"/></g><g transform="translate(73,22.8)"><path d="M2 -5.6V4.8M-5.4 4.4H4.8" stroke="#cbcbcb" stroke-width="1" fill="none"/><rect x="1" y="3.2" width="2.2" height="2.2" fill="#c4c4c4"/></g><g transform="translate(89,22.8)"><path d="M-5.4 4.4H5" stroke="#cbcbcb" stroke-width="1" fill="none"/><path d="M1.6 -5V3" stroke="#c6c6c6" stroke-width="1"/><circle cx="1.6" cy="-1.6" r="1.1" fill="#c4c4c4"/></g><g transform="translate(106,22.8)"><path d="M4 -5.6V4.4M-4.6 4.4H4.6" stroke="#cbcbcb" stroke-width="1" fill="none"/><circle cx="-0.4" cy="-2" r="1.1" fill="#c8c8c8"/></g><rect x="124.2" y="15.4" width="15.4" height="15" rx="1.5" fill="#d7d7d7" stroke="#bdbdbd" stroke-width="0.9"/><g transform="translate(131.6,22.8)"><path d="M-5.2 -0.4C-3.6 -3.4 -1.6 -4.4 0 -3.6C-2.6 -0.6 0 3.8 4.6 4.8" stroke="#444" stroke-width="1.1" fill="none"/><path d="M0 -6l2.5 2.4l-2.5 2.4l-2.5 -2.4z" fill="#4a3fe6" stroke="#2a20b8" stroke-width="0.5"/></g><g transform="translate(148.6,22.8)"><path d="M-4.6 -4.6C0.6 -3.6 2.6 -0.6 1 3.6" stroke="#cdeccd" stroke-width="3" fill="none" stroke-linecap="round"/><path d="M-4.6 -4.6C0.6 -3.6 2.6 -0.6 1 3.6" stroke="#2f6e3a" stroke-width="1.2" fill="none"/><path d="M-1.6 1.6L0.8 4.4L4 0.2" stroke="#2f6e3a" stroke-width="1.3" fill="none"/></g><g transform="translate(166,22.8)"><path d="M-3.4 2.6L3.4 -3" stroke="#cfcfcf" stroke-width="1.6" stroke-linecap="round"/></g><g transform="translate(182.8,22.8)"><path d="M-5.4 -4.8C-0.4 -4 1.8 -1.6 1.6 1.2" stroke="#555" stroke-width="1.1" fill="none"/><path d="M5 -0.6L0.6 4.6" stroke="#3a6e48" stroke-width="1.2"/><path d="M-0.2 1.6l2.2 2l-2 2.2l-2.2 -2z" fill="#3d7a50" stroke="#2a5a3a" stroke-width="0.5"/></g><g transform="translate(200,22.8)"><path d="M-5 -4.8L-1.4 -3.8" stroke="#3c6048" stroke-width="1.1"/><rect x="-2.2" y="-5" width="2.8" height="2.8" fill="#cfe6d3" stroke="#2f6040" stroke-width="0.9"/><path d="M0.4 -2C3 -0.6 -2.6 2.2 0.4 3.8L4.6 0.6" stroke="#4a5a50" stroke-width="1.1" fill="none"/></g><g transform="translate(216.6,22.8)"><path d="M-4 4.4L3.6 -4.4" stroke="#f2b6c2" stroke-width="3.2" stroke-linecap="round"/><path d="M-4 4.4L3.6 -4.4" stroke="#d8384e" stroke-width="1.6" stroke-linecap="round"/><path d="M-1.6 1.6L1.4 -1.8" stroke="#2c5a34" stroke-width="1.8" stroke-linecap="round"/></g><g transform="translate(233,22.8)"><path d="M4.4 -5.8V3.6M-4.6 3.4H4.9" stroke="#8e8e8e" stroke-width="1" fill="none"/><rect x="-1.8" y="-3" width="2.6" height="2.6" fill="#3c6a48"/><rect x="-2.6" y="-3.8" width="4.2" height="4.2" fill="none" stroke="#c8e2cc" stroke-width="0.8"/></g><g transform="translate(250,22.8)"><path d="M4.6 -5.8V4.4" stroke="#444" stroke-width="1" stroke-dasharray="1.2 0.9"/><path d="M-4.4 4H4.6" stroke="#444" stroke-width="1" stroke-dasharray="1.2 0.9"/><path d="M-1 -4.6l0.9 1.9l1.9 0.9l-1.9 0.9l-0.9 1.9l-0.9 -1.9l-1.9 -0.9l1.9 -0.9z" fill="#555"/></g><rect x="262.1" y="16.3" width="0.9" height="13" fill="#cdcdcd"/><rect x="263" y="16.3" width="0.8" height="13" fill="#e8e8e8"/><linearGradient id="pgg" x1="0" y1="0" x2="1" y2="1"><stop offset="0" stop-color="#fff"/><stop offset="0.5" stop-color="#f4f4f4"/><stop offset="1" stop-color="#b4b4b4"/></linearGradient><g transform="translate(275.2,23.3)"><rect x="-3.3" y="-4.4" width="7.6" height="10" fill="#777" opacity="0.7"/><rect x="-3.8" y="-5" width="7.4" height="10" fill="url(#pgg)" stroke="#3c3c3c" stroke-width="0.9"/></g><rect x="284.4" y="15.4" width="16" height="15" rx="1.5" fill="#d7d7d7" stroke="#bdbdbd" stroke-width="0.9"/><g transform="translate(292.5,23)"><rect x="-5.6" y="-5.6" width="11.2" height="11.2" fill="#a9a4f2"/><path d="M-4.5 -5.4V5.4M-5.4 -4.5H5.4" stroke="#2a22e0" stroke-width="1.1"/><path d="M-1.5 -5.4V5.4M-5.4 -1.5H5.4" stroke="#2a22e0" stroke-width="1.1"/><path d="M1.5 -5.4V5.4M-5.4 1.5H5.4" stroke="#2a22e0" stroke-width="1.1"/><path d="M4.5 -5.4V5.4M-5.4 4.5H5.4" stroke="#2a22e0" stroke-width="1.1"/></g><rect x="301.6" y="15.4" width="16.4" height="15" rx="1.5" fill="#d7d7d7" stroke="#bdbdbd" stroke-width="0.9"/><g transform="translate(309.6,23.2)"><path d="M-4.4 -5.2V5.4M-0.4 5.4L4 -5.2M4.4 -5.2V5.4" stroke="#c5c1f4" stroke-width="2.4" fill="none"/><path d="M-4.4 -5.2V5.4M-0.4 5.4L4 -5.2M4.4 -5.2V5.4" stroke="#3a30d8" stroke-width="1.05" fill="none"/></g><g transform="translate(15,40.3)"><path d="M-4.6 -5h4.6l2.2 2.2v6.8h-6.8z" fill="#fdfdfb" stroke="#e6e6e0" stroke-width="0.6"/><path d="M2.2 -0.6v6.4M-1 2.6h6.4" stroke="#5f9318" stroke-width="2.2"/></g><g transform="translate(31.6,40.3)"><rect x="-4.2" y="-4.8" width="7" height="2.4" rx="0.5" fill="#b5a48a"/><path d="M-5.8 -3.2h11.6v7.4a0.8 0.8 0 0 1 -0.8 0.8h-10a0.8 0.8 0 0 1 -0.8 -0.8z" fill="#f5a623"/><path d="M-5.8 -0.6h11.6" stroke="#f8bb55" stroke-width="0.8"/></g><g transform="translate(48.4,40.3)"><rect x="-4.7" y="-4.9" width="9.4" height="9.6" rx="1.3" fill="#2e8bd9"/><rect x="-2.8" y="-4.9" width="5.6" height="3" fill="#5aa8e6"/><path d="M-0.9 -3.6h1.8v3h1.7l-2.6 3l-2.6 -3h1.7z" fill="#eef6fc"/></g><g transform="translate(66,40.3)"><rect x="-2.6" y="-4.8" width="5.2" height="3.2" fill="#b4b0b0"/><rect x="-3.1" y="-0.5" width="6.2" height="5.4" fill="#d62b30"/><rect x="-3.1" y="-1.3" width="6.2" height="1" fill="#e9a0a0"/></g><rect x="76.9" y="33.8" width="0.9" height="13" fill="#cdcdcd"/><rect x="77.8" y="33.8" width="0.8" height="13" fill="#e8e8e8"/><g transform="translate(89.4,40.3)"><rect x="-1.4" y="-4.8" width="6.8" height="9" fill="#fbfbfb"/><path d="M5.2 -3.6C4.4 0.4 2 1.6 -0.6 1.4V3.4L-5 -0.2L-0.6 -3.4V-1.4C1.6 -1.2 3.6 -1.8 5.2 -3.6z" fill="#1c6fba"/></g><g transform="translate(107,40.3)"><rect x="-4.6" y="-4.6" width="7.8" height="9" fill="#fbfbfb"/><path d="M-4.4 3.6C-3.6 -0.4 -1.2 -1.8 1.2 -1.6V-3.6L5.6 -0.2L1.2 3.2V1.2C-1 1 -2.8 1.8 -4.4 3.6z" fill="#1c6fba"/></g><g transform="translate(131.6,40.3)"><path d="M-4 -1.4L-0.8 -4.2V-2.4C2.4 -2.4 3.8 0 3.2 3.6C2.6 1.4 1.4 0.4 -0.8 0.4V2z" fill="#c6c6c6"/></g><g transform="translate(148.4,40.3)"><path d="M4 -1.4L0.8 -4.2V-2.4C-2.4 -2.4 -3.8 0 -3.2 3.6C-2.6 1.4 -1.4 0.4 0.8 0.4V2z" fill="#c6c6c6"/></g><rect x="159.9" y="33.8" width="0.9" height="13" fill="#cdcdcd"/><rect x="160.8" y="33.8" width="0.8" height="13" fill="#e8e8e8"/><g transform="translate(172.6,40.3)"><path d="M-4 -4.2h4.4M-4 -2.4h2.6M-4 -0.6h2.6M-4 1.2h2.6M-4 3h2.6" stroke="#8a8a8a" stroke-width="1.1"/><rect x="-0.6" y="-2.2" width="6" height="7" fill="#f6f6f6"/><path d="M0.6 -0.4h3.4M0.6 1.4h3.4M0.6 3.2h2" stroke="#8a8a8a" stroke-width="1"/></g><g transform="translate(190,40.3)"><path d="M-3.8 -4.6L1.6 2.4M1.4 -4.6L-2.6 1" stroke="#c4c4c4" stroke-width="1.2"/><rect x="1" y="1.2" width="3.2" height="3.2" fill="none" stroke="#bdbdbd" stroke-width="0.9"/><circle cx="-3" cy="2.6" r="1.4" fill="none" stroke="#cacaca" stroke-width="0.8"/></g><g transform="translate(207.2,40.3)"><rect x="-4" y="-4.4" width="8" height="9" rx="0.8" fill="#f7e3cc" stroke="#f1cfa8" stroke-width="0.8"/><rect x="-1.6" y="-5.2" width="3.2" height="1.6" fill="#b8b8b8"/><path d="M-2.2 -2h4.4M-2.2 0.2h4.4M-2.2 2.4h4.4" stroke="#9a948c" stroke-width="1"/></g><rect x="218.9" y="33.8" width="0.9" height="13" fill="#cdcdcd"/><rect x="219.8" y="33.8" width="0.8" height="13" fill="#e8e8e8"/><g transform="translate(231.6,40.3)"><circle cx="-0.3" cy="-0.6" r="4.7" fill="#e4e6e8" stroke="#1e1e1e" stroke-width="1.3"/><rect x="-3" y="-2.8" width="5.4" height="4.4" fill="#fafafa" stroke="#9aa0a8" stroke-width="0.7"/><path d="M-3 0.8h5.4" stroke="#8a9098" stroke-width="0.8"/><path d="M3.1 2.8L4.9 4.6" stroke="#111" stroke-width="1.9" stroke-linecap="round"/></g><g transform="translate(248.6,40.3)"><circle cx="-0.3" cy="-0.6" r="4.7" fill="#e4e6e8" stroke="#1e1e1e" stroke-width="1.3"/><circle cx="-1.2" cy="-1.6" r="1.8" fill="#eeeec8" stroke="#6a6a50" stroke-width="0.7"/><rect x="-0.8" y="-0.6" width="3.4" height="2.8" rx="0.8" fill="#f4f4d8" stroke="#6a6a50" stroke-width="0.7"/><path d="M3.1 2.8L4.9 4.6" stroke="#111" stroke-width="1.9" stroke-linecap="round"/></g><g transform="translate(265.6,40.3)"><circle cx="-0.3" cy="-0.6" r="4.7" fill="#e4e6e8" stroke="#1e1e1e" stroke-width="1.3"/><rect x="-2.4" y="-3.6" width="4.2" height="6" fill="#fcfcfc" stroke="#444" stroke-width="0.9"/><path d="M3.1 2.8L4.9 4.6" stroke="#111" stroke-width="1.9" stroke-linecap="round"/></g><rect x="277.3" y="33.8" width="0.9" height="13" fill="#cdcdcd"/><rect x="278.2" y="33.8" width="0.8" height="13" fill="#e8e8e8"/><g transform="translate(290.2,40.3)"><rect x="-5.8" y="-5.2" width="7" height="6.4" fill="#9aa8bc" stroke="#7c8798" stroke-width="0.7"/><rect x="-3.2" y="-3.2" width="9" height="8.2" rx="0.8" fill="#cfe0ee" stroke="#7d8a9c" stroke-width="0.9"/><rect x="-0.4" y="-4.4" width="1.8" height="1.8" fill="#556"/></g><g transform="translate(307.2,40.3)"><rect x="-5.8" y="-5.2" width="6.6" height="5.6" fill="#a4aab8" stroke="#828a9a" stroke-width="0.7"/><rect x="-3.2" y="-3" width="8.6" height="8" fill="#e0e2c0" stroke="#444" stroke-width="1"/><path d="M-0.6 0.4v-1.2a1.6 1.6 0 0 1 3.2 0v1.2" stroke="#3a3c30" stroke-width="1" fill="none"/><rect x="-1.4" y="0.4" width="4.8" height="3.2" rx="0.5" fill="#3a3c30"/><rect x="-0.4" y="1.5" width="2.8" height="0.9" fill="#e0e2c0"/></g><g transform="translate(324.2,40.3)"><rect x="-5.8" y="-5.2" width="6.6" height="5.6" fill="#a4aab8" stroke="#828a9a" stroke-width="0.7"/><rect x="-3.2" y="-3" width="8.6" height="8" fill="#cdd2cf" stroke="#444" stroke-width="1"/><path d="M-0.6 0.4v-1.2a1.6 1.6 0 0 1 3.2 0v1.2" stroke="#4a4c4a" stroke-width="1" fill="none"/><rect x="-1.4" y="0.4" width="4.8" height="3.2" rx="0.5" fill="#4a4c4a"/><rect x="-0.4" y="1.5" width="2.8" height="0.9" fill="#cdd2cf"/></g><g transform="translate(348.4,40.3)"><circle cx="-1.6" cy="1.4" r="3" fill="#2a78c4"/><circle cx="1.8" cy="-1.8" r="2.6" fill="#dc2a2a"/><circle cx="-1.6" cy="1.4" r="3.6" fill="none" stroke="#d6ecf8" stroke-width="0.9"/><rect x="-5.1" y="-5.3" width="1.8" height="1.8" fill="#555"/><rect x="3.3" y="-5.3" width="1.8" height="1.8" fill="#555"/><rect x="-5.1" y="3.1" width="1.8" height="1.8" fill="#555"/><rect x="3.3" y="3.1" width="1.8" height="1.8" fill="#555"/></g><g transform="translate(365.4,40.3)"><circle cx="-1.6" cy="1.4" r="3" fill="#2a78c4"/><circle cx="1.8" cy="-1.8" r="2.6" fill="#dc2a2a"/><circle cx="-1.6" cy="1.4" r="3.6" fill="none" stroke="#d6ecf8" stroke-width="0.9"/><rect x="-5.1" y="-5.3" width="1.8" height="1.8" fill="#556"/><rect x="-0.7" y="-6.1" width="1.8" height="1.8" fill="#667"/><rect x="4.1" y="-4.5" width="1.8" height="1.8" fill="#888"/><rect x="-5.3" y="-0.3" width="1.8" height="1.8" fill="#556"/><rect x="-5.1" y="3.3" width="1.8" height="1.8" fill="#555"/><rect x="1.7" y="3.5" width="1.8" height="1.8" fill="#555"/><rect x="4.5" y="0.7" width="1.8" height="1.8" fill="#988"/></g><rect x="377.3" y="33.8" width="0.9" height="13" fill="#cdcdcd"/><rect x="378.2" y="33.8" width="0.8" height="13" fill="#e8e8e8"/><linearGradient id="fsg" x1="0" y1="0" x2="0.55" y2="0.55"><stop offset="0" stop-color="#fff"/><stop offset="0.5" stop-color="#f4f4f4"/><stop offset="0.85" stop-color="#888"/><stop offset="1" stop-color="#111"/></linearGradient><g transform="translate(389.6,40.3)"><g transform="scale(1)"><path d="M-5 -4.8H5L-4.4 5.2H-5z" fill="url(#fsg)"/><path d="M-5.1 5.2V-4.9H4.8" stroke="#151515" stroke-width="1.3" fill="none"/><path d="M3.8 -3.2L-4.3 5" stroke="#0a0a0a" stroke-width="2.7"/><path d="M-5.6 5.1H-3.6" stroke="#0a0a0a" stroke-width="1.2"/><ellipse cx="5.5" cy="-2.3" rx="1.25" ry="2.1" fill="#d9cc62" transform="rotate(-38 5.5 -2.3)"/><path d="M3.4 -2.2L5 -0.2" stroke="#3a3410" stroke-width="1"/></g></g><text x="400.9" y="45.7" font-size="15.6" font-weight="bold" fill="#0a0a0a" font-family="Liberation Serif, serif">T</text><g transform="translate(424.2,40.3)"><path d="M-4.8 -3.8H3.2L5.2 -2.6V3.4H-3.2L-4.8 2.2" fill="#f4f4f4"/><path d="M-4.8 -3.8H3.2L5.2 -2.6M-4.8 -1.8H3.2L5.2 -0.6M-4.8 0.2H3.2L5.2 1.4M-4.4 2.2H3.2L5.2 3.4" stroke="#222" stroke-width="1" fill="none"/><path d="M5.2 -2.6V3.6" stroke="#555" stroke-width="0.9"/></g><g transform="translate(441.2,40.3)"><rect x="-5.4" y="-5.4" width="10.8" height="10.8" fill="#f4f4f0" stroke="#777" stroke-width="1.1"/><rect x="-5.4" y="-5.4" width="10.8" height="3" fill="#8a8a8a"/><path d="M-1.2 -1L-3.2 0.9L-1.2 2.8M1.2 -1L3.2 0.9L1.2 2.8" stroke="#333" stroke-width="1.1" fill="none"/></g><g transform="translate(458,40.3)"><path d="M-5 -6V6" stroke="#f2a4b6" stroke-width="1.3"/><rect x="-3.6" y="-5" width="4" height="3" fill="#dde4f0" stroke="#445" stroke-width="0.8"/><rect x="-3.6" y="-1.4" width="9" height="3" fill="#9aa2b0" stroke="#333" stroke-width="0.8"/><rect x="-3.6" y="2.2" width="6.4" height="3" fill="#e8ecf4" stroke="#445" stroke-width="0.8"/></g><g transform="translate(482.8,40.3)"><path d="M-2.6 -3.4V3.6M0.6 -4.4V3.6M3.4 -2V3.6" stroke="#f0c4d0" stroke-width="1"/><path d="M-4.4 2.4H5" stroke="#ecc8d2" stroke-width="0.8"/></g><g transform="translate(500,40.3)"><path d="M-4 -5.2h5l2 2v7.4h-7z" fill="#fbfdff" stroke="#eef2f6" stroke-width="0.6"/><rect x="1.5" y="-0.8" width="1.8" height="1.8" fill="#5a86a8"/><rect x="1.5" y="1.8" width="1.8" height="2.8" fill="#5a86a8"/></g><g transform="translate(14.6,59.2)"><rect x="-3.4" y="-4" width="6.8" height="7.6" fill="#dc8c8e" stroke="#d27a7e" stroke-width="0.6"/><path d="M-2 -1.8h4M-2 0h4M-2 1.8h4" stroke="#c46a70" stroke-width="0.8"/><rect x="-2.4" y="-5" width="4.4" height="1.2" fill="#c8bcbc"/></g><g transform="translate(31.8,59.2)"><rect x="-4.6" y="-4.4" width="9.4" height="8.8" fill="#fafafa"/><rect x="-4.8" y="-4.6" width="9.8" height="9.2" fill="none" stroke="#111" stroke-width="1.3" stroke-dasharray="1.6 0.9"/><path d="M-3 -2.2h6M-3 0h6M-3 2.2h6" stroke="#333" stroke-width="1"/><path d="M3.4 -3.6V3.8" stroke="#333" stroke-width="0.9"/></g><g transform="translate(48.8,59.2)"><rect x="-4.8" y="-4.4" width="9.6" height="9" fill="none" stroke="#cacaca" stroke-width="1" stroke-dasharray="1.6 1.1"/><rect x="-1.6" y="-2.2" width="3.6" height="3.6" fill="none" stroke="#cfcfcf" stroke-width="0.8"/><path d="M-2.6 2.6h5.6" stroke="#cdcdcd" stroke-width="0.8"/></g><rect x="59.9" y="52.7" width="0.9" height="13" fill="#cdcdcd"/><rect x="60.8" y="52.7" width="0.8" height="13" fill="#e8e8e8"/><g transform="translate(73.4,59.2)"><path d="M-3.8 -0.6A4 4 0 1 1 -1.6 3.4" stroke="#cacaca" stroke-width="1.3" fill="none"/><path d="M-5.6 -0.4l1.8 2.4l1.8 -2.4z" fill="#cacaca"/></g><g transform="translate(90,59.2)"><path d="M3.8 -0.6A4 4 0 1 0 1.6 3.4" stroke="#cacaca" stroke-width="1.3" fill="none"/><path d="M5.6 -0.4l-1.8 2.4l-1.8 -2.4z" fill="#cacaca"/></g><g transform="translate(107,59.2)"><path d="M-0.8 -4.6V4L-4.6 4zM0.8 -4.6V4L4.6 4z" fill="none" stroke="#cacaca" stroke-width="0.9"/></g><g transform="translate(124.2,59.2)"><path d="M-4.4 -4.8V4.8M-3 -4.4L4.4 0L-3 4.4z" fill="none" stroke="#cacaca" stroke-width="0.9"/></g><rect x="135.5" y="52.7" width="0.9" height="13" fill="#cdcdcd"/><rect x="136.4" y="52.7" width="0.8" height="13" fill="#e8e8e8"/><g transform="translate(149,59.2)"><path d="M-1.6 -4.6V2.6M0.4 -3.6h3.6M0.4 -1.6h3.6M0.4 0.4h3.6M-4.2 3.8h8.6" stroke="#b6b6b6" stroke-width="1.1"/></g><g transform="translate(166,59.2)"><path d="M-4.6 -1.2h3M-0.2 -4.2h4M-0.2 -2.2h4M-0.2 -0.2h4M-0.2 1.8h4M-2.2 -3V1" stroke="#b6b6b6" stroke-width="1.1"/><path d="M-1 3.8h5" stroke="#cccccc" stroke-width="1"/></g><g transform="translate(183,59.2)"><path d="M-4.2 -4.2h6.4M-4.2 -2.2h3.4M-4.2 -0.2h3.4M-4.2 1.8h3.4M-4.2 3.8h3.4" stroke="#b6b6b6" stroke-width="1.1"/><rect x="0.6" y="-0.8" width="3.6" height="2.8" fill="#b6b6b6"/></g><g transform="translate(200,59.2)"><path d="M-4.4 -4.4h8.8M-4 -2.2h3.4M-4 -0.2h3.4M-4 1.8h3.4M-4 3.8h3.4M2.6 -3V4.4" stroke="#b6b6b6" stroke-width="1.1"/></g><rect x="211.3" y="52.7" width="0.9" height="13" fill="#cdcdcd"/><rect x="212.2" y="52.7" width="0.8" height="13" fill="#e8e8e8"/><path d="M261.8 57.7l1.5 -2.2l1.5 2.2zM261.8 60.9l1.5 2.2l1.5 -2.2z" fill="#adadad"/><path d="M314.2 57.7l1.5 -2.2l1.5 2.2zM314.2 60.9l1.5 2.2l1.5 -2.2z" fill="#adadad"/><path d="M369.5 57.7l1.5 -2.2l1.5 2.2zM369.5 60.9l1.5 2.2l1.5 -2.2z" fill="#adadad"/><path d="M439.1 57.7l1.5 -2.2l1.5 2.2zM439.1 60.9l1.5 2.2l1.5 -2.2z" fill="#adadad"/><g transform="translate(383.6,59.8)"><g transform="scale(0.85)"><path d="M0.8 -0.6V-2.6a1.7 1.7 0 0 1 3.4 0V-1.6" stroke="#d8c860" stroke-width="1.1" fill="none"/><rect x="-3.6" y="-0.8" width="5.6" height="4.6" rx="0.7" fill="#e6c62e"/><rect x="-3.6" y="0.6" width="5.6" height="0.9" fill="#f2dc70"/></g></g><path d="M466.5 57.6l1.7 -2.5l1.7 2.5zM466.5 61l1.7 2.5l1.7 -2.5z" fill="#777"/><g transform="translate(523,59)"><path d="M-4 -3.2H3.6V0.6M-3.2 -1.3H1.7V0.6" stroke="#1c1c1c" stroke-width="1.05" fill="none"/><path d="M-3.4 2.4H1.6" stroke="#1c1c1c" stroke-width="0.8" stroke-dasharray="1 0.8"/><circle cx="2.6" cy="2.4" r="1.05" fill="#1c1c1c"/></g><g transform="translate(539.9,59)"><path d="M-4 -3.2H0.6A3 3 0 0 1 3.6 -0.2V0.6M-3.2 -1.3H-0.2A2 2 0 0 1 1.7 0.4" stroke="#1c1c1c" stroke-width="1" fill="none"/><path d="M-3.4 2.4H1.6" stroke="#1c1c1c" stroke-width="0.8" stroke-dasharray="1 0.8"/><circle cx="2.6" cy="2.4" r="1.05" fill="#1c1c1c"/></g><g transform="translate(557,59)"><path d="M-4 -3.2H3.6V0.6" stroke="#d9e3ee" stroke-width="2.8" fill="none"/><path d="M-4 -3.2H3.6V0.6M-3.2 -1.3H1.7V0.6" stroke="#1c1c1c" stroke-width="1.05" fill="none"/><path d="M-3.4 2.4H1.6" stroke="#1c1c1c" stroke-width="0.8" stroke-dasharray="1 0.8"/><circle cx="2.6" cy="2.4" r="1.05" fill="#1c1c1c"/></g><g transform="translate(574,59)"><path d="M-3.6 -3.4H3.6V-0.2M-3.6 -3.4V-0.2M-1.2 -3V-0.2M1.2 -3V-0.2" stroke="#1c1c1c" stroke-width="1.2" fill="none"/><path d="M-3.4 2.4H1.6" stroke="#1c1c1c" stroke-width="0.8" stroke-dasharray="1 0.8"/><circle cx="2.6" cy="2.4" r="1.05" fill="#1c1c1c"/></g><rect x="0.8" y="76.8" width="17.8" height="17.4" rx="1.5" fill="#d3d3d3" stroke="#bcbcbc" stroke-width="0.9"/><g transform="translate(10,73)"><path d="M-2.4 -0.6h4.8" stroke="#cfcfcf" stroke-width="0.8" stroke-dasharray="0.8 0.8"/></g><g transform="translate(10,85.6)"><path d="M-2.6 -4.4L3.8 0.4L0.6 1L-0.8 4.4z" fill="none" stroke="#3c3c3c" stroke-width="1" stroke-linejoin="round"/></g><g transform="translate(10,105.1)"><path d="M-4.6 -2.6H4.6" stroke="#3c3c3c" stroke-width="0.9"/><path d="M-3.6 3C-3.4 -0.6 -2 -2.4 0 -2.6C2 -2.4 3.4 -0.6 3.6 3" stroke="#3c3c3c" stroke-width="1" fill="none"/><rect x="-1" y="-3.6" width="2" height="2" fill="#dedede" stroke="#3c3c3c" stroke-width="0.8"/><rect x="-5.2" y="-3.5" width="1.8" height="1.8" fill="#3c3c3c"/><rect x="3.4" y="-3.5" width="1.8" height="1.8" fill="#3c3c3c"/><rect x="-4.8" y="2" width="2.4" height="2" fill="#dedede" stroke="#3c3c3c" stroke-width="0.8"/><rect x="2.4" y="2" width="2.4" height="2" fill="#dedede" stroke="#3c3c3c" stroke-width="0.8"/></g><g transform="translate(10,124.6)"><path d="M-1.6 -2.8L0 -4.6L1.6 -2.8zM-1.6 2.8L0 4.6L1.6 2.8zM-2.8 -1.6L-4.6 0L-2.8 1.6zM2.8 -1.6L4.6 0L2.8 1.6z" fill="#3c3c3c" stroke="#3c3c3c" stroke-width="0.6" stroke-linejoin="round"/></g><g transform="translate(10,144.1)"><circle cx="-0.8" cy="-0.8" r="3.2" fill="none" stroke="#3c3c3c" stroke-width="1.1"/><path d="M1.6 1.6L4.4 4.4" stroke="#3c3c3c" stroke-width="1.3" stroke-linecap="round"/></g><g transform="translate(10,163.6)"><rect x="-3.8" y="-3.8" width="7.6" height="7.6" fill="none" stroke="#3c3c3c" stroke-width="1"/></g><g transform="translate(10,183.1)"><path d="M0 -4.6L4 -2.4V2.4L0 4.6L-4 2.4V-2.4zM-4 -2.4L0 -0.2L4 -2.4M0 -0.2V4.6" fill="none" stroke="#3c3c3c" stroke-width="0.9" stroke-linejoin="round"/></g><g transform="translate(10,202.6)"><circle cx="0" cy="0" r="4" fill="none" stroke="#3c3c3c" stroke-width="1"/></g><g transform="translate(10,222.1)"><polygon points="0.00,-4.30 4.37,-1.12 2.70,4.02 -2.70,4.02 -4.37,-1.12" fill="none" stroke="#3c3c3c" stroke-width="1.1" stroke-linejoin="round"/><polygon points="0.00,-2.40 1.70,2.85 -2.76,-0.40 2.76,-0.40 -1.70,2.85" fill="none" stroke="#3c3c3c" stroke-width="0.8" stroke-linejoin="round"/></g><g transform="translate(10,241.6)"><circle cx="0" cy="0" r="4" fill="none" stroke="#3c3c3c" stroke-width="1"/><circle cx="0" cy="0" r="2" fill="none" stroke="#3c3c3c" stroke-width="0.9"/><circle cx="0" cy="0" r="0.6" fill="#3c3c3c"/></g><g transform="translate(10,261.1)"><path d="M2.8 -4.6L4.2 -3.2L-0.6 2.6L-2.6 3.2L-2 1.2z" fill="#3c3c3c"/><path d="M-3.8 2.2C-2 5.4 1.6 2.4 3.4 4.4" stroke="#3c3c3c" stroke-width="0.9" fill="none"/></g><g transform="translate(10,280.6)"><path d="M-5.2 1.6C-2.6 1.6 -1.4 -2.8 0.4 -0.4C1.8 1.6 3 -3.4 5 -3.2" stroke="#3c3c3c" stroke-width="1" fill="none"/><path d="M-2.8 -2L2.8 1.4" stroke="#3c3c3c" stroke-width="0.6"/><circle cx="-0.2" cy="-0.4" r="1.2" fill="#dedede" stroke="#3c3c3c" stroke-width="0.8"/></g><g transform="translate(10,300.1)"><path d="M-2.6 -4.2H2.6L3.8 -0.4L1.4 3H-1.4L-3.8 -0.4z" fill="none" stroke="#3c3c3c" stroke-width="1" stroke-linejoin="round"/><path d="M0 -3.4V0.4" stroke="#3c3c3c" stroke-width="0.9"/><path d="M-1.6 3v1.8h3.2V3" stroke="#3c3c3c" stroke-width="0.9" fill="none"/></g><text x="6.2" y="323.3" font-size="10.6" fill="#3c3c3c" font-family="Liberation Sans, sans-serif">A</text><g transform="translate(10,339.1)"><circle cx="0" cy="0" r="1.5" fill="#dedede" stroke="#3c3c3c" stroke-width="0.9"/><circle cx="3.70" cy="0.00" r="0.55" fill="#3c3c3c"/><circle cx="2.62" cy="2.62" r="0.55" fill="#3c3c3c"/><circle cx="0.00" cy="3.70" r="0.55" fill="#3c3c3c"/><circle cx="-2.62" cy="2.62" r="0.55" fill="#3c3c3c"/><circle cx="-3.70" cy="0.00" r="0.55" fill="#3c3c3c"/><circle cx="-2.62" cy="-2.62" r="0.55" fill="#3c3c3c"/><circle cx="-0.00" cy="-3.70" r="0.55" fill="#3c3c3c"/><circle cx="2.62" cy="-2.62" r="0.55" fill="#3c3c3c"/></g><g transform="translate(10,358.6)"><rect x="-3.4" y="-4.2" width="4.6" height="4.4" rx="1.4" fill="none" stroke="#3c3c3c" stroke-width="1" transform="rotate(-20)"/><rect x="-1.4" y="-0.6" width="4.8" height="4.6" rx="1.4" fill="#dedede" stroke="#3c3c3c" stroke-width="1" transform="rotate(-20)"/></g><g transform="translate(10,378.1)"><path d="M0 -4.8C1.6 -2.6 4 -0.8 4 1.6A4 3.6 0 0 1 -4 1.6C-4 -0.8 -1.6 -2.6 0 -4.8z" fill="none" stroke="#3c3c3c" stroke-width="1"/><path d="M-1.8 1.8a1.9 1.6 0 0 0 3.6 0" stroke="#3c3c3c" stroke-width="0.8" fill="none"/></g><g transform="translate(10,397.6)"><rect x="-3.9" y="-3.9" width="7.8" height="7.8" fill="#e8e8e8" stroke="#3c3c3c" stroke-width="1"/><path d="M-3.6 -3.6V3.6H3.6z" fill="#555"/><path d="M-3.6 -0.6L0.6 3.6M-3.6 -2.4L2.4 3.6" stroke="#aaa" stroke-width="0.6"/></g><g transform="translate(10,417.1)"><path d="M1.2 -1.8L-3.6 3L-4.2 4.4L-2.8 3.8L2 -1" fill="none" stroke="#3c3c3c" stroke-width="0.9" stroke-linejoin="round"/><path d="M0.6 -3L3.2 -0.4" stroke="#3c3c3c" stroke-width="1.3"/><path d="M2 -2L3.6 -4.2a1 1 0 0 1 1.2 1.4z" fill="#3c3c3c" stroke="#3c3c3c" stroke-width="1"/></g><g transform="translate(10,436.6)"><rect x="-3.2" y="-4.8" width="6" height="5.6" fill="none" stroke="#3c3c3c" stroke-width="1"/><path d="M0 0.8V2.4" stroke="#3c3c3c" stroke-width="0.9"/><rect x="-1.6" y="2.2" width="3" height="2.6" rx="0.5" fill="none" stroke="#3c3c3c" stroke-width="0.9"/></g><g transform="translate(964.6,77.8)"><g transform="scale(0.95)"><path d="M-5 -4.8H5L-4.4 5.2H-5z" fill="url(#fsg)"/><path d="M-5.1 5.2V-4.9H4.8" stroke="#151515" stroke-width="1.3" fill="none"/><path d="M3.8 -3.2L-4.3 5" stroke="#0a0a0a" stroke-width="2.7"/><path d="M-5.6 5.1H-3.6" stroke="#0a0a0a" stroke-width="1.2"/><ellipse cx="5.5" cy="-2.3" rx="1.25" ry="2.1" fill="#d9cc62" transform="rotate(-38 5.5 -2.3)"/><path d="M3.4 -2.2L5 -0.2" stroke="#3a3410" stroke-width="1"/></g></g><g transform="translate(964.4,350.2)"><path d="M-5 -6V6" stroke="#f2a4b6" stroke-width="1.3"/><rect x="-3.6" y="-5" width="4" height="3" fill="#dde4f0" stroke="#445" stroke-width="0.8"/><rect x="-3.6" y="-1.4" width="9" height="3" fill="#9aa2b0" stroke="#333" stroke-width="0.8"/><rect x="-3.6" y="2.2" width="6.4" height="3" fill="#e8ecf4" stroke="#445" stroke-width="0.8"/></g><rect x="1144.3" y="74.2" width="6.4" height="6.4" rx="1" fill="#e2e2e2" stroke="#7c7c7c" stroke-width="0.9"/><path d="M1146.3 75.7l3 1.7l-3 1.7z" fill="#555"/><rect x="1157.3" y="74.2" width="6.4" height="6.4" rx="1" fill="#e2e2e2" stroke="#7c7c7c" stroke-width="0.9"/><path d="M1158.8 75.7l3.4 3.4M1162.2 75.7l-3.4 3.4" stroke="#4a4a4a" stroke-width="1.3"/><rect x="1144.3" y="346.6" width="6.4" height="6.4" rx="1" fill="#e2e2e2" stroke="#7c7c7c" stroke-width="0.9"/><path d="M1146.3 348.1l3 1.7l-3 1.7z" fill="#555"/><rect x="1157.3" y="346.6" width="6.4" height="6.4" rx="1" fill="#e2e2e2" stroke="#7c7c7c" stroke-width="0.9"/><path d="M1158.8 348.1l3.4 3.4M1162.2 348.1l-3.4 3.4" stroke="#4a4a4a" stroke-width="1.3"/><linearGradient id="flg" x1="0" y1="0" x2="0.4" y2="1"><stop offset="0" stop-color="#7f99bd"/><stop offset="0.6" stop-color="#b9c8dc"/><stop offset="1" stop-color="#f2f4f8"/></linearGradient><rect x="962" y="92.2" width="6.8" height="7.4" fill="url(#flg)"/><path d="M988 100V93.2H994.6" stroke="#4a4a4a" stroke-width="0.9" fill="none"/><path d="M988 100.2H994.4V93.4" stroke="#b4b4b4" stroke-width="0.8" fill="none"/><g transform="translate(1054.4,97.4)"><path d="M-3.4 -2.6H1.4" stroke="#555" stroke-width="0.8"/><path d="M-3.4 0H3.4M-3.4 2.6H3.4" stroke="#444" stroke-width="0.9"/><path d="M1.2 -4.2l2.4 1.6l-2.4 1.6z" fill="#333"/></g><g transform="translate(972.9,118.4)"><path d="M-2.4 -2.4L2.4 2.4M2.4 -2.4L-2.4 2.4" stroke="#a6a6a6" stroke-width="1.1"/></g><linearGradient id="lgd" x1="0" y1="0" x2="1" y2="0"><stop offset="0" stop-color="#d9d9d9"/><stop offset="1" stop-color="#efefef"/></linearGradient><radialGradient id="rgd"><stop offset="0" stop-color="#f4f4f4"/><stop offset="1" stop-color="#d9d9d9"/></radialGradient><rect x="984.8" y="111.8" width="12.4" height="12.4" fill="#d9d9d9" stroke="#c9c9c9" stroke-width="0.9"/><rect x="1003.4" y="111.8" width="12.4" height="12.4" fill="url(#lgd)" stroke="#c9c9c9" stroke-width="0.9"/><rect x="1021.9" y="111.8" width="12.4" height="12.4" fill="url(#rgd)" stroke="#c9c9c9" stroke-width="0.9"/><rect x="1040.2" y="111.8" width="12.4" height="12.4" fill="#e6e6e6" stroke="#c9c9c9" stroke-width="0.9"/><rect x="1058.4" y="111.8" width="12.4" height="12.4" fill="#ececec" stroke="#c9c9c9" stroke-width="0.9"/><path d="M1046.4 111.8V124.2M1040.2 118H1052.6" stroke="#c9c9c9" stroke-width="0.9"/><path d="M1059.4 123.2H1069.8V112.8" stroke="#bdbdbd" stroke-width="1.2" fill="none"/><text x="1078.6" y="123.2" font-size="13.4" font-weight="bold" fill="#a9a9a9" font-family="Liberation Sans, sans-serif">?</text><g transform="translate(1139.5,118.4)"><path d="M-3.4 -3.4h2.2v2.4a1.2 1.2 0 0 0 2.4 0v-2.4h2.2v3a3.4 3.6 0 0 1 -6.8 0z" fill="#7c7c7c"/></g><g transform="translate(1153.2,118.4)"><path d="M-3.6 -3.2l1.6 0.6l2 1.4l2 -1.4l1.6 -0.6v2.8a3.6 3.8 0 0 1 -7.2 0z" fill="#b2b2b2"/></g><path d="M1157.2 298.3l1.5 -2.2l1.5 2.2zM1157.2 301.5l1.5 2.2l1.5 -2.2z" fill="#adadad"/><path d="M1157.2 327.7l1.5 -2.2l1.5 2.2zM1157.2 330.9l1.5 2.2l1.5 -2.2z" fill="#adadad"/><path d="M1000.7 541.6l1.5 -2.2l1.5 2.2zM1000.7 544.8l1.5 2.2l1.5 -2.2z" fill="#555"/><path d="M1049.7 541.6l1.5 -2.2l1.5 2.2zM1049.7 544.8l1.5 2.2l1.5 -2.2z" fill="#555"/><path d="M1154.5 378l1.7 -2.5l1.7 2.5zM1154.5 381.4l1.7 2.5l1.7 -2.5z" fill="#666"/><path d="M1152.9 648.1l1.5 -2.2l1.5 2.2zM1152.9 651.3l1.5 2.2l1.5 -2.2z" fill="#555"/><path d="M177.9 648l1.7 -2.5l1.7 2.5zM177.9 651.4l1.7 2.5l1.7 -2.5z" fill="#777"/><path d="M101.9 648.2l1.5 -2.2l1.5 2.2zM101.9 651.4l1.5 2.2l1.5 -2.2z" fill="#b0b0b0"/><g transform="translate(971.2,411.8)"><path d="M4 -4.8V4.6" stroke="#edc978" stroke-width="1" stroke-dasharray="1.2 0.8"/><rect x="-5" y="-4" width="8.2" height="2.8" fill="#fbfbfb" stroke="#9a9a9a" stroke-width="0.8"/><rect x="-1" y="1" width="3.4" height="3.2" fill="#fbfbfb" stroke="#9a9a9a" stroke-width="0.8"/><circle cx="4.6" cy="-4.6" r="0.7" fill="#c08a3a"/></g><g transform="translate(991.6,411.8)"><path d="M-5.4 -5V4.8" stroke="#edc978" stroke-width="1"/><rect x="-3.4" y="-4" width="8" height="2.8" fill="#fbfbfb" stroke="#9a9a9a" stroke-width="0.8"/><rect x="-3" y="1" width="3.8" height="3.2" fill="#fbfbfb" stroke="#9a9a9a" stroke-width="0.8"/></g><g transform="translate(1012.2,411.8)"><path d="M0 -5V4.8" stroke="#edc978" stroke-width="1"/><rect x="-4" y="-4" width="8" height="2.8" fill="#fbfbfb" stroke="#9a9a9a" stroke-width="0.8"/><rect x="-2.2" y="1" width="4.4" height="3.2" fill="#fbfbfb" stroke="#9a9a9a" stroke-width="0.8"/></g><g transform="translate(1032.8,411.8)"><path d="M5.4 -5V4.8" stroke="#edc978" stroke-width="1"/><rect x="-4.6" y="-4" width="8" height="2.8" fill="#fbfbfb" stroke="#9a9a9a" stroke-width="0.8"/><rect x="-1" y="1" width="4" height="3.2" fill="#fbfbfb" stroke="#9a9a9a" stroke-width="0.8"/></g><g transform="translate(1053.8,411.8)"><path d="M-5 -4.8V4.6" stroke="#edc978" stroke-width="1" stroke-dasharray="1.2 0.8"/><rect x="-3.4" y="-4" width="7.4" height="2.8" fill="#fbfbfb" stroke="#9a9a9a" stroke-width="0.8"/><rect x="-3" y="1" width="3.4" height="3.2" fill="#fbfbfb" stroke="#9a9a9a" stroke-width="0.8"/><circle cx="-5.4" cy="-4.8" r="0.7" fill="#c08a3a"/></g><g transform="translate(971.2,432.4)"><path d="M-11 4.3H4.6" stroke="#edc978" stroke-width="1"/><rect x="-5" y="-4.6" width="3.2" height="7.2" fill="#fbfbfb" stroke="#9a9a9a" stroke-width="0.8"/><rect x="0.4" y="-1" width="4" height="3.4" fill="#fbfbfb" stroke="#9a9a9a" stroke-width="0.8"/><circle cx="4.4" cy="4.6" r="0.7" fill="#8a6a3a"/></g><g transform="translate(991.6,432.4)"><path d="M-6.4 -5.7H5.4" stroke="#edc978" stroke-width="1"/><rect x="-5.4" y="-3" width="3.8" height="7.8" fill="#fbfbfb" stroke="#9a9a9a" stroke-width="0.8"/><rect x="1" y="-3" width="3.4" height="4.4" fill="#fbfbfb" stroke="#9a9a9a" stroke-width="0.8"/></g><g transform="translate(1012.2,432.4)"><path d="M-6 0.4H6" stroke="#edc978" stroke-width="1"/><rect x="-4.4" y="-4.6" width="3.4" height="8.8" fill="#fbfbfb" stroke="#9a9a9a" stroke-width="0.8"/><rect x="1.2" y="-1.8" width="3.4" height="3.8" fill="#fbfbfb" stroke="#9a9a9a" stroke-width="0.8"/></g><g transform="translate(1032.8,432.4)"><path d="M-6 4.3H6" stroke="#edc978" stroke-width="1"/><rect x="-4.4" y="-5.2" width="3.6" height="8.4" fill="#fbfbfb" stroke="#9a9a9a" stroke-width="0.8"/><rect x="1.2" y="-0.8" width="3.8" height="4" fill="#fbfbfb" stroke="#9a9a9a" stroke-width="0.8"/></g><g transform="translate(1053.8,432.4)"><path d="M-5.4 -4.4H4.4" stroke="#edc978" stroke-width="1" stroke-dasharray="1.2 0.8"/><rect x="-5" y="-1.2" width="3.4" height="6" fill="#fbfbfb" stroke="#9a9a9a" stroke-width="0.8"/><rect x="0.6" y="-3" width="4.4" height="4" fill="#fbfbfb" stroke="#9a9a9a" stroke-width="0.8"/><circle cx="4.6" cy="-5.2" r="0.7" fill="#c08a3a"/></g><path d="M1070 405V417" stroke="#e86a7a" stroke-width="1"/><text x="1069.6" y="415.4" font-size="14" font-weight="bold" fill="#14141c" font-family="Liberation Serif, serif">y</text><text x="1072.8" y="409.6" font-size="8.8" font-weight="bold" fill="#14141c" font-family="Liberation Serif, serif">a</text><path d="M1067 436.6H1081" stroke="#e86a7a" stroke-width="1"/><text x="1067.4" y="435" font-size="12.6" font-weight="bold" fill="#14141c" font-family="Liberation Serif, serif">y</text><text x="1073.8" y="435" font-size="11" font-weight="bold" fill="#14141c" font-family="Liberation Serif, serif">a</text><g transform="translate(991,467)"><path d="M-4.6 -6V5.8M1.8 -6V5.8" stroke="#7d9cbd" stroke-width="0.8"/><path d="M-3.8 -5.4h2.6" stroke="#7d9cbd" stroke-width="0.9" stroke-dasharray="0.9 0.7"/><rect x="-4.6" y="-3.2" width="3.4" height="6.8" fill="#fbfbfb" stroke="#9a9a9a" stroke-width="0.8"/><rect x="1.8" y="-2.6" width="3.4" height="5.6" fill="#fbfbfb" stroke="#9a9a9a" stroke-width="0.8"/></g><g transform="translate(1012,467)"><path d="M-2.9 -6V5.8M3.5 -6V5.8" stroke="#7d9cbd" stroke-width="0.8"/><path d="M-2.1 -5.4h2.6" stroke="#7d9cbd" stroke-width="0.9" stroke-dasharray="0.9 0.7"/><rect x="-4.6" y="-3.2" width="3.4" height="6.8" fill="#fbfbfb" stroke="#9a9a9a" stroke-width="0.8"/><rect x="1.8" y="-2.6" width="3.4" height="5.6" fill="#fbfbfb" stroke="#9a9a9a" stroke-width="0.8"/></g><g transform="translate(1032.8,467)"><path d="M-1.2 -6V5.8M5.2 -6V5.8" stroke="#7d9cbd" stroke-width="0.8"/><path d="M-0.4 -5.4h2.6" stroke="#7d9cbd" stroke-width="0.9" stroke-dasharray="0.9 0.7"/><rect x="-4.6" y="-3.2" width="3.4" height="6.8" fill="#fbfbfb" stroke="#9a9a9a" stroke-width="0.8"/><rect x="1.8" y="-2.6" width="3.4" height="5.6" fill="#fbfbfb" stroke="#9a9a9a" stroke-width="0.8"/></g><g transform="translate(1053.8,467)"><path d="M-0.4 -6V5.8M1 -6V5.8" stroke="#7d9cbd" stroke-width="0.8"/><path d="M0.4 -5.4h2.6" stroke="#7d9cbd" stroke-width="0.9" stroke-dasharray="0.9 0.7"/><rect x="-4.6" y="-3.2" width="3.4" height="6.8" fill="#fbfbfb" stroke="#9a9a9a" stroke-width="0.8"/><rect x="1.8" y="-2.6" width="3.4" height="5.6" fill="#fbfbfb" stroke="#9a9a9a" stroke-width="0.8"/></g><g transform="translate(991,488.2)"><path d="M-6 -5.2H5.6M-6 1.8H5.6" stroke="#7d9cbd" stroke-width="0.8"/><path d="M5.2 -4.4v2.4" stroke="#7d9cbd" stroke-width="1" stroke-dasharray="0.9 0.7"/><rect x="-2.4" y="-5.2" width="6.4" height="3.2" fill="#fbfbfb" stroke="#9a9a9a" stroke-width="0.8"/><rect x="-3.4" y="1.8" width="6.4" height="3.2" fill="#fbfbfb" stroke="#9a9a9a" stroke-width="0.8"/></g><g transform="translate(1012,488.2)"><path d="M-6 -3.6H5.6M-6 3.4H5.6" stroke="#7d9cbd" stroke-width="0.8"/><path d="M5.2 -2.8v2.4" stroke="#7d9cbd" stroke-width="1" stroke-dasharray="0.9 0.7"/><rect x="-2.4" y="-5.2" width="6.4" height="3.2" fill="#fbfbfb" stroke="#9a9a9a" stroke-width="0.8"/><rect x="-3.4" y="1.8" width="6.4" height="3.2" fill="#fbfbfb" stroke="#9a9a9a" stroke-width="0.8"/></g><g transform="translate(1032.8,488.2)"><path d="M-6 -2H5.6M-6 5H5.6" stroke="#7d9cbd" stroke-width="0.8"/><path d="M5.2 -1.2v2.4" stroke="#7d9cbd" stroke-width="1" stroke-dasharray="0.9 0.7"/><rect x="-2.4" y="-5.2" width="6.4" height="3.2" fill="#fbfbfb" stroke="#9a9a9a" stroke-width="0.8"/><rect x="-3.4" y="1.8" width="6.4" height="3.2" fill="#fbfbfb" stroke="#9a9a9a" stroke-width="0.8"/></g><g transform="translate(1053.8,488.2)"><path d="M-6 -1.2H5.6M-6 1H5.6" stroke="#7d9cbd" stroke-width="0.8"/><path d="M5.2 -0.4v2.4" stroke="#7d9cbd" stroke-width="1" stroke-dasharray="0.9 0.7"/><rect x="-2.4" y="-5.2" width="6.4" height="3.2" fill="#fbfbfb" stroke="#9a9a9a" stroke-width="0.8"/><rect x="-3.4" y="1.8" width="6.4" height="3.2" fill="#fbfbfb" stroke="#9a9a9a" stroke-width="0.8"/></g><path d="M1067.6 473V461.2H1078" stroke="#e0485a" stroke-width="1" fill="none"/><text x="1067.8" y="470" font-size="10.6" font-weight="bold" fill="#14141c" font-family="Liberation Serif, serif">a</text><text x="1072.6" y="470" font-size="14" font-weight="bold" fill="#14141c" font-family="Liberation Serif, serif">y</text><path d="M1067 487.2H1081M1067 495.6H1080" stroke="#e0485a" stroke-width="1" fill="none"/><text x="1073.6" y="485.6" font-size="10.4" font-weight="bold" fill="#14141c" font-family="Liberation Serif, serif">y</text><text x="1074.8" y="494.6" font-size="9.6" font-weight="bold" fill="#14141c" font-family="Liberation Serif, serif">a</text><path d="M1068.6 488.4V494.4" stroke="#222" stroke-width="1.2"/><path d="M1070 491l3 0.6" stroke="#222" stroke-width="1"/><g transform="translate(1012.2,508.3)"><rect x="-6.65" y="-5.65" width="3.3" height="3.3" rx="0.3" fill="#ecd23c" stroke="#5a4a12" stroke-width="0.8"/><rect x="0.7" y="-6.8" width="3" height="2.8" rx="0.3" fill="#ecd23c" stroke="#5a4a12" stroke-width="0.8"/><rect x="3.9" y="-2.6" width="3" height="2.8" rx="0.3" fill="#ecd23c" stroke="#5a4a12" stroke-width="0.8"/><rect x="-1.6" y="-0.6" width="3.2" height="2.8" rx="0.3" fill="#ecd23c" stroke="#5a4a12" stroke-width="0.8"/><rect x="-6.65" y="3.95" width="3.3" height="3.3" rx="0.3" fill="#ecd23c" stroke="#5a4a12" stroke-width="0.8"/><rect x="-0.65" y="3.35" width="3.3" height="3.3" rx="0.3" fill="#ecd23c" stroke="#5a4a12" stroke-width="0.8"/></g><g transform="translate(1053.9,508.3)"><path d="M-5 0L3.4 -3.4V5.4z" stroke="#e0504a" stroke-width="0.9" fill="none"/><rect x="-7.5" y="-2.2" width="5" height="4" rx="0.8" fill="#ecd23c" stroke="#5a4a12" stroke-width="0.8"/><rect x="1.8" y="-5.7" width="3.2" height="4.6" rx="1" fill="#ecd23c" stroke="#5a4a12" stroke-width="0.8"/><rect x="1.8" y="4" width="3.2" height="3.2" rx="0.3" fill="#ecd23c" stroke="#5a4a12" stroke-width="0.8"/></g><rect x="1061.4" y="536.6" width="3" height="3.8" fill="#c3cedb" stroke="#3c4656" stroke-width="0.9"/><rect x="1061.4" y="542" width="3" height="8.6" fill="#c3cedb" stroke="#3c4656" stroke-width="0.9"/><rect x="1066.4" y="536.6" width="3.6" height="14" fill="#c3cedb" stroke="#3c4656" stroke-width="0.9"/><rect x="1072" y="536.6" width="3.6" height="14" fill="#c3cedb" stroke="#3c4656" stroke-width="0.9"/><g transform="translate(970.6,578)"><path d="M-6.4 -2L-3.4 -4.6L-0.4 -2V3.4H-6.4z" fill="none" stroke="#5a6aa0" stroke-width="0.9" stroke-linejoin="round"/><path d="M6.4 -4C3 -3.2 1.6 -1.6 -0.2 0.4C1.8 1 4.4 2.4 6 4.6" fill="none" stroke="#4e5e98" stroke-width="1"/></g><g transform="translate(970.6,613.4)"><path d="M-6.4 6C-5 -4 -3.6 -4 -2.4 1C-1.2 6 1 8 2.6 1C3.6 -3.6 5 -5.6 6.4 -6.6" stroke="#b4b4c4" stroke-width="0.8" fill="none"/><path d="M-6.6 0H6.6" stroke="#2a20d8" stroke-width="0.9"/><circle cx="-5.2" cy="0" r="1.55" fill="#c8c4f4" stroke="#2a20d8" stroke-width="1"/><circle cx="-1.2" cy="0" r="1.55" fill="#c8c4f4" stroke="#2a20d8" stroke-width="1"/><circle cx="5" cy="0" r="1.55" fill="#c8c4f4" stroke="#2a20d8" stroke-width="1"/></g><g transform="translate(991.4,613.4)"><path d="M-6 -6C-1 -6 2 -4 -3 -1C-8 2 -4 6 0 5C4 4 5 5 7 6" stroke="#b4b4c4" stroke-width="0.8" fill="none"/><circle cx="0.4" cy="-5.6" r="1.55" fill="#c8c4f4" stroke="#2a20d8" stroke-width="1"/><circle cx="0.4" cy="-1" r="1.55" fill="#c8c4f4" stroke="#2a20d8" stroke-width="1"/><circle cx="0.4" cy="5" r="1.55" fill="#c8c4f4" stroke="#2a20d8" stroke-width="1"/></g><g transform="translate(1012,613.4)"><path d="M-6 1C-3 6 0 -4 2 2C3 5 5 4 6 0" stroke="#b4b4c4" stroke-width="0.8" fill="none"/><path d="M-5.6 0.6V-6.6H5.6V0.6M0 -6.6V-1" stroke="#7a2a2a" stroke-width="1" fill="none"/><rect x="-6.8" y="0.4" width="2.4" height="2.8" rx="0.5" fill="#b8b4f0" stroke="#2a20d8" stroke-width="0.9"/><rect x="-1.2" y="-1" width="2.4" height="2.8" rx="0.5" fill="#b8b4f0" stroke="#2a20d8" stroke-width="0.9"/><rect x="4.4" y="0.4" width="2.4" height="2.8" rx="0.5" fill="#b8b4f0" stroke="#2a20d8" stroke-width="0.9"/></g><g transform="translate(1034.4,613.4)"><path d="M-2.6 -6.4H5V5H-2.6M-1 -0.6H5" stroke="#e0504a" stroke-width="1" fill="none"/><path d="M5 -6.4V5" stroke="#5a2a2a" stroke-width="0.8"/><rect x="-4.6" y="-7.6" width="2.4" height="2.8" rx="0.5" fill="#b8b4f0" stroke="#2a20d8" stroke-width="0.9"/><rect x="-3" y="-2" width="2.4" height="2.8" rx="0.5" fill="#b8b4f0" stroke="#2a20d8" stroke-width="0.9"/><rect x="-4.6" y="3.6" width="2.4" height="2.8" rx="0.5" fill="#b8b4f0" stroke="#2a20d8" stroke-width="0.9"/></g><g transform="translate(116.8,649.4)"><path d="M-3.8 0.4C-2 -3 2 -3 3.8 0.4C2 3.2 -2 3.2 -3.8 0.4z" fill="#333"/><circle cx="0" cy="0" r="1.3" fill="#999"/><circle cx="0" cy="0" r="0.6" fill="#111"/><path d="M-2.2 -3.4L-1.4 -2M0 -4V-2.4M2.2 -3.4L1.4 -2" stroke="#333" stroke-width="0.8"/></g><g transform="translate(128.6,650.4)"><g transform="scale(0.95)"><path d="M0.8 -0.6V-2.6a1.7 1.7 0 0 1 3.4 0V-1.6" stroke="#d8c860" stroke-width="1.1" fill="none"/><rect x="-3.6" y="-0.8" width="5.6" height="4.6" rx="0.7" fill="#e6c62e"/><rect x="-3.6" y="0.6" width="5.6" height="0.9" fill="#f2dc70"/></g></g></svg>
</div></body></html>
